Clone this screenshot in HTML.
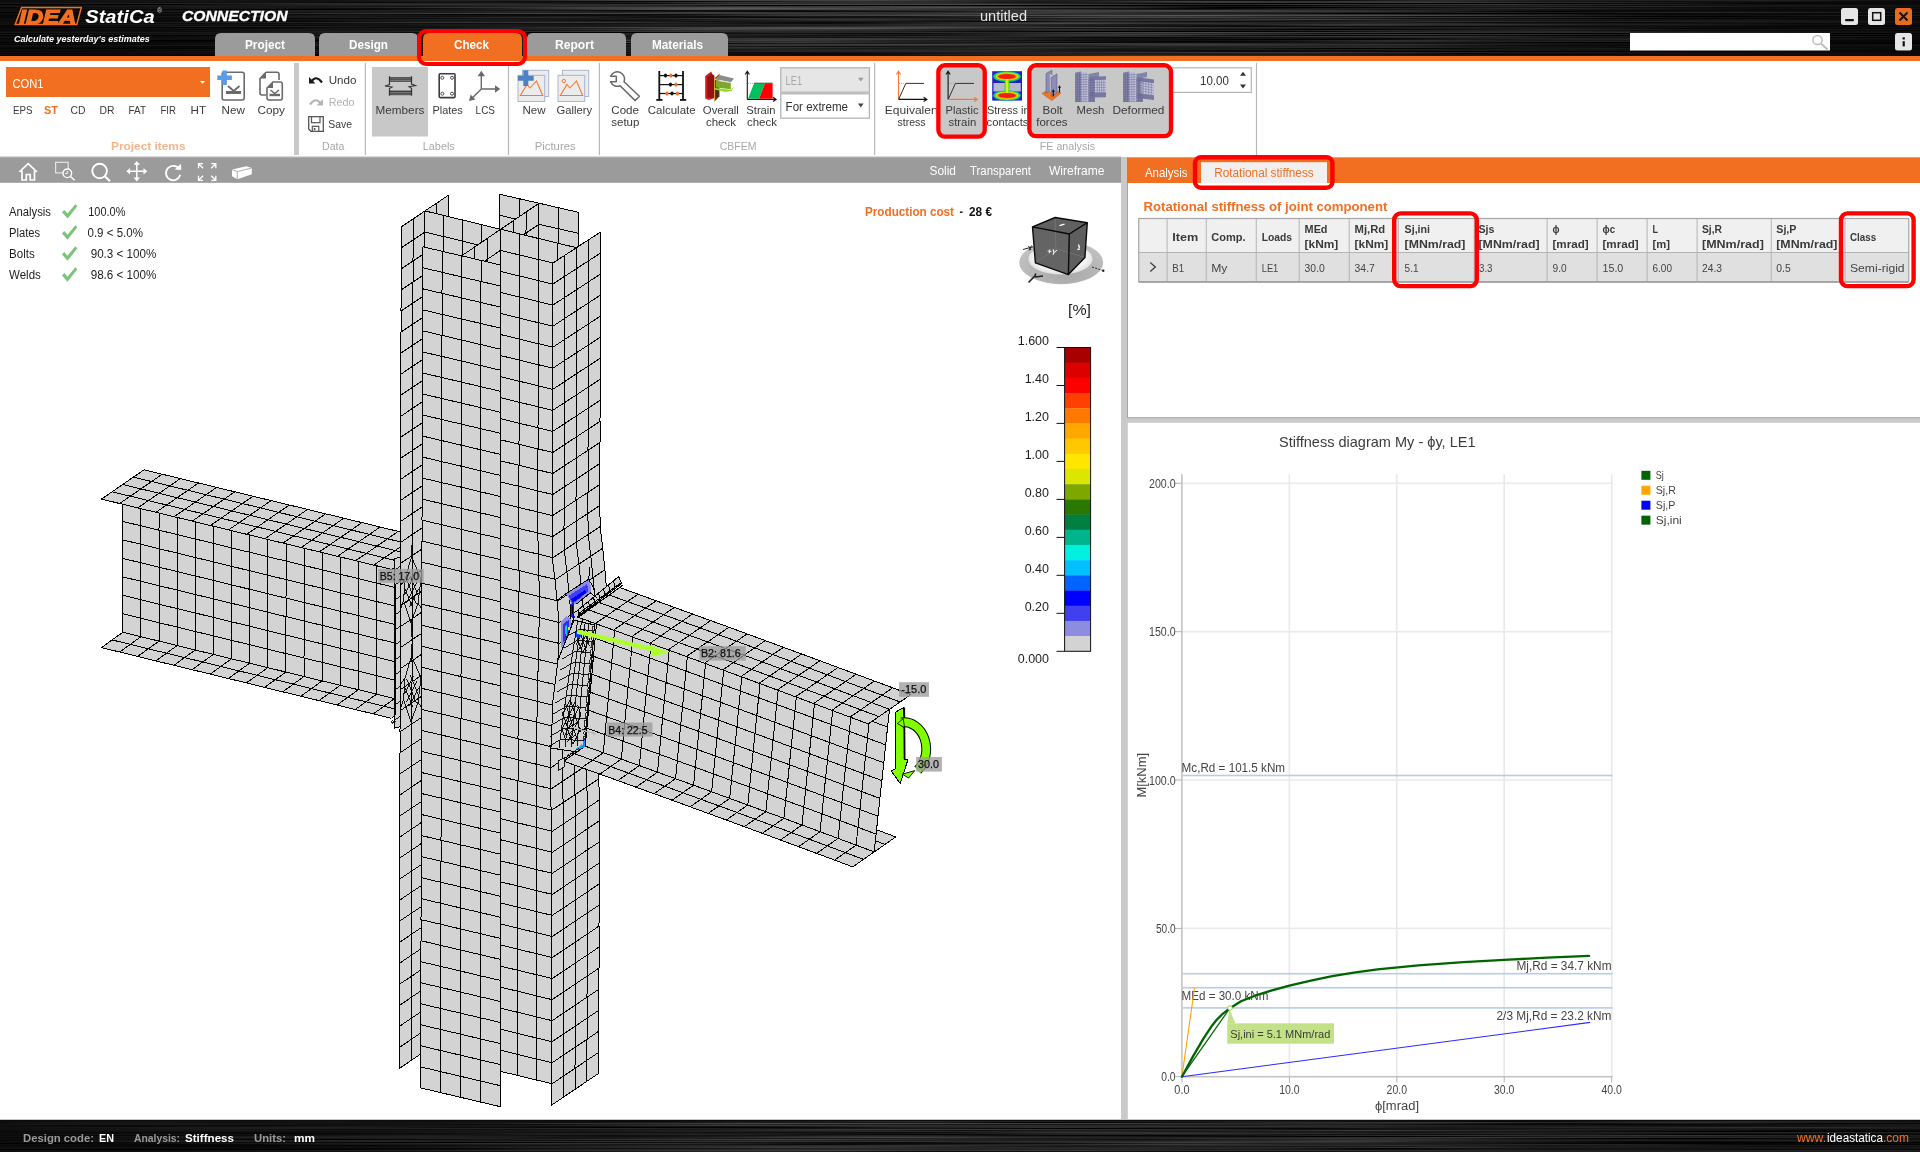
<!DOCTYPE html>
<html><head><meta charset="utf-8"><title>IDEA StatiCa Connection</title>
<style>
html,body{margin:0;padding:0;background:#fff;}
body{width:1920px;height:1152px;overflow:hidden;position:relative;font-family:"Liberation Sans",sans-serif;}
svg{position:absolute;left:0;top:0;will-change:transform;}
svg text{font-family:"Liberation Sans",sans-serif;}
</style></head><body>
<svg width="1920" height="1152" viewBox="0 0 1920 1152">
<defs>
<filter id="brush" x="0" y="0" width="100%" height="100%" filterUnits="objectBoundingBox" color-interpolation-filters="sRGB">
<feTurbulence type="fractalNoise" baseFrequency="0.002 1.1" numOctaves="3" seed="11" result="n"/>
<feColorMatrix in="n" type="matrix" values="0.72 0 0 0 -0.185  0.72 0 0 0 -0.185  0.72 0 0 0 -0.185  0 0 0 0 1"/>
</filter>
<filter id="brush2" x="0" y="0" width="100%" height="100%" filterUnits="objectBoundingBox" color-interpolation-filters="sRGB">
<feTurbulence type="fractalNoise" baseFrequency="0.002 0.85" numOctaves="3" seed="3" result="n"/>
<feColorMatrix in="n" type="matrix" values="0.5 0 0 0 -0.115  0.5 0 0 0 -0.115  0.5 0 0 0 -0.115  0 0 0 0 1"/>
</filter>
<linearGradient id="tbg" x1="0" y1="0" x2="1" y2="0">
<stop offset="0" stop-color="#000" stop-opacity="0.72"/><stop offset="0.12" stop-color="#000" stop-opacity="0.6"/><stop offset="0.35" stop-color="#000" stop-opacity="0.15"/><stop offset="0.55" stop-color="#000" stop-opacity="0"/><stop offset="0.72" stop-color="#000" stop-opacity="0.2"/><stop offset="0.9" stop-color="#000" stop-opacity="0.62"/><stop offset="1" stop-color="#000" stop-opacity="0.75"/>
</linearGradient>
<linearGradient id="sbg" x1="0" y1="0" x2="1" y2="0">
<stop offset="0" stop-color="#000" stop-opacity="0.65"/><stop offset="0.15" stop-color="#000" stop-opacity="0.5"/><stop offset="0.4" stop-color="#000" stop-opacity="0.05"/><stop offset="0.7" stop-color="#000" stop-opacity="0.05"/><stop offset="1" stop-color="#000" stop-opacity="0.45"/>
</linearGradient>
<linearGradient id="tbv" x1="0" y1="0" x2="0" y2="1">
<stop offset="0" stop-color="#000" stop-opacity="0"/><stop offset="0.5" stop-color="#000" stop-opacity="0.1"/><stop offset="1" stop-color="#000" stop-opacity="0.35"/>
</linearGradient>
</defs><g id="mesh" shape-rendering="crispEdges"><path d="M144.1,617 162.2,621.4 180.3,625.8 198.4,630.3 216.6,634.7 234.7,639.1 252.8,643.5 270.9,647.9 289.1,652.4 307.2,656.8 325.3,661.2 343.4,665.6 361.6,670 379.7,674.4 397.8,678.9 415.9,683.3 434.1,687.7 423.4,695.4 412.8,703 402.1,710.6 391.4,718.3 373.3,713.9 355.2,709.5 337.1,705 318.9,700.6 300.8,696.2 282.7,691.8 264.6,687.4 246.4,682.9 228.3,678.5 210.2,674.1 192.1,669.7 173.9,665.3 155.8,660.9 137.7,656.4 119.6,652 101.5,647.6 112.1,639.9 122.8,632.3 133.4,624.6Z" fill="#d3d3d3" stroke="none"/><path d="M144.1,617 133.4,624.6 122.8,632.3 112.1,639.9 101.5,647.6M162.2,621.4 151.5,629.1 140.9,636.7 130.2,644.4 119.6,652M180.3,625.8 169.7,633.5 159,641.1 148.3,648.8 137.7,656.4M198.4,630.3 187.8,637.9 177.1,645.6 166.5,653.2 155.8,660.9M216.6,634.7 205.9,642.3 195.2,650 184.6,657.6 173.9,665.3M234.7,639.1 224,646.7 213.4,654.4 202.7,662 192.1,669.7M252.8,643.5 242.2,651.2 231.5,658.8 220.8,666.5 210.2,674.1M270.9,647.9 260.3,655.6 249.6,663.2 239,670.9 228.3,678.5M289.1,652.4 278.4,660 267.8,667.6 257.1,675.3 246.4,682.9M307.2,656.8 296.5,664.4 285.9,672.1 275.2,679.7 264.6,687.4M325.3,661.2 314.6,668.8 304,676.5 293.4,684.1 282.7,691.8M343.4,665.6 332.8,673.3 322.1,680.9 311.5,688.6 300.8,696.2M361.6,670 350.9,677.7 340.2,685.3 329.6,693 318.9,700.6M379.7,674.4 369,682.1 358.4,689.7 347.7,697.4 337.1,705M397.8,678.9 387.1,686.5 376.5,694.2 365.9,701.8 355.2,709.5M415.9,683.3 405.3,690.9 394.6,698.6 384,706.2 373.3,713.9M434.1,687.7 423.4,695.4 412.8,703 402.1,710.6 391.4,718.3M144.1,617 162.2,621.4 180.3,625.8 198.4,630.3 216.6,634.7 234.7,639.1 252.8,643.5 270.9,647.9 289.1,652.4 307.2,656.8 325.3,661.2 343.4,665.6 361.6,670 379.7,674.4 397.8,678.9 415.9,683.3 434.1,687.7M133.4,624.6 151.5,629.1 169.7,633.5 187.8,637.9 205.9,642.3 224,646.7 242.2,651.2 260.3,655.6 278.4,660 296.5,664.4 314.6,668.8 332.8,673.3 350.9,677.7 369,682.1 387.1,686.5 405.3,690.9 423.4,695.4M122.8,632.3 140.9,636.7 159,641.1 177.1,645.6 195.2,650 213.4,654.4 231.5,658.8 249.6,663.2 267.8,667.6 285.9,672.1 304,676.5 322.1,680.9 340.2,685.3 358.4,689.7 376.5,694.2 394.6,698.6 412.8,703M112.1,639.9 130.2,644.4 148.3,648.8 166.5,653.2 184.6,657.6 202.7,662 220.8,666.5 239,670.9 257.1,675.3 275.2,679.7 293.4,684.1 311.5,688.6 329.6,693 347.7,697.4 365.9,701.8 384,706.2 402.1,710.6M101.5,647.6 119.6,652 137.7,656.4 155.8,660.9 173.9,665.3 192.1,669.7 210.2,674.1 228.3,678.5 246.4,682.9 264.6,687.4 282.7,691.8 300.8,696.2 318.9,700.6 337.1,705 355.2,709.5 373.3,713.9 391.4,718.3" fill="none" stroke="#000" stroke-width="1" stroke-linejoin="round"/><path d="M122.8,484.4 140.9,488.9 159.1,493.3 177.2,497.7 195.4,502.1 213.5,506.5 231.7,510.9 249.8,515.3 268,519.7 286.2,524.1 304.3,528.5 322.5,532.9 340.6,537.3 358.8,541.7 376.9,546.1 395.1,550.5 395,569 395,587.5 394.9,606 394.9,624.5 394.8,643 394.7,661.6 394.7,680.1 394.6,698.6 376.5,694.2 358.4,689.7 340.2,685.3 322.1,680.9 304,676.5 285.9,672.1 267.8,667.6 249.6,663.2 231.5,658.8 213.4,654.4 195.2,650 177.1,645.6 159,641.1 140.9,636.7 122.8,632.3 122.8,613.8 122.8,595.3 122.8,576.9 122.8,558.4 122.8,539.9 122.8,521.4 122.8,502.9Z" fill="#d3d3d3" stroke="none"/><path d="M122.8,484.4 122.8,502.9 122.8,521.4 122.8,539.9 122.8,558.4 122.8,576.9 122.8,595.3 122.8,613.8 122.8,632.3M140.9,488.9 140.9,507.3 140.9,525.8 140.9,544.3 140.9,562.8 140.9,581.3 140.9,599.8 140.9,618.2 140.9,636.7M159.1,493.3 159.1,511.7 159,530.2 159,548.7 159,567.2 159,585.7 159,604.2 159,622.7 159,641.1M177.2,497.7 177.2,516.1 177.2,534.6 177.2,553.1 177.2,571.6 177.2,590.1 177.1,608.6 177.1,627.1 177.1,645.6M195.4,502.1 195.4,520.6 195.3,539 195.3,557.5 195.3,576 195.3,594.5 195.3,613 195.3,631.5 195.2,650M213.5,506.5 213.5,525 213.5,543.4 213.5,561.9 213.5,580.4 213.4,598.9 213.4,617.4 213.4,635.9 213.4,654.4M231.7,510.9 231.7,529.4 231.6,547.9 231.6,566.3 231.6,584.8 231.6,603.3 231.5,621.8 231.5,640.3 231.5,658.8M249.8,515.3 249.8,533.8 249.8,552.3 249.8,570.8 249.7,589.3 249.7,607.7 249.7,626.2 249.7,644.7 249.6,663.2M268,519.7 268,538.2 267.9,556.7 267.9,575.2 267.9,593.7 267.8,612.2 267.8,630.7 267.8,649.2 267.8,667.6M286.2,524.1 286.1,542.6 286.1,561.1 286.1,579.6 286,598.1 286,616.6 285.9,635.1 285.9,653.6 285.9,672.1M304.3,528.5 304.3,547 304.2,565.5 304.2,584 304.2,602.5 304.1,621 304.1,639.5 304,658 304,676.5M322.5,532.9 322.4,551.4 322.4,569.9 322.3,588.4 322.3,606.9 322.3,625.4 322.2,643.9 322.2,662.4 322.1,680.9M340.6,537.3 340.6,555.8 340.5,574.3 340.5,592.8 340.4,611.3 340.4,629.8 340.3,648.3 340.3,666.8 340.2,685.3M358.8,541.7 358.7,560.2 358.7,578.7 358.6,597.2 358.6,615.7 358.5,634.2 358.5,652.7 358.4,671.2 358.4,689.7M376.9,546.1 376.9,564.6 376.8,583.1 376.8,601.6 376.7,620.1 376.7,638.6 376.6,657.1 376.6,675.7 376.5,694.2M395.1,550.5 395,569 395,587.5 394.9,606 394.9,624.5 394.8,643 394.7,661.6 394.7,680.1 394.6,698.6M122.8,484.4 140.9,488.9 159.1,493.3 177.2,497.7 195.4,502.1 213.5,506.5 231.7,510.9 249.8,515.3 268,519.7 286.2,524.1 304.3,528.5 322.5,532.9 340.6,537.3 358.8,541.7 376.9,546.1 395.1,550.5M122.8,502.9 140.9,507.3 159.1,511.7 177.2,516.1 195.4,520.6 213.5,525 231.7,529.4 249.8,533.8 268,538.2 286.1,542.6 304.3,547 322.4,551.4 340.6,555.8 358.7,560.2 376.9,564.6 395,569M122.8,521.4 140.9,525.8 159,530.2 177.2,534.6 195.3,539 213.5,543.4 231.6,547.9 249.8,552.3 267.9,556.7 286.1,561.1 304.2,565.5 322.4,569.9 340.5,574.3 358.7,578.7 376.8,583.1 395,587.5M122.8,539.9 140.9,544.3 159,548.7 177.2,553.1 195.3,557.5 213.5,561.9 231.6,566.3 249.8,570.8 267.9,575.2 286.1,579.6 304.2,584 322.3,588.4 340.5,592.8 358.6,597.2 376.8,601.6 394.9,606M122.8,558.4 140.9,562.8 159,567.2 177.2,571.6 195.3,576 213.5,580.4 231.6,584.8 249.7,589.3 267.9,593.7 286,598.1 304.2,602.5 322.3,606.9 340.4,611.3 358.6,615.7 376.7,620.1 394.9,624.5M122.8,576.9 140.9,581.3 159,585.7 177.2,590.1 195.3,594.5 213.4,598.9 231.6,603.3 249.7,607.7 267.8,612.2 286,616.6 304.1,621 322.3,625.4 340.4,629.8 358.5,634.2 376.7,638.6 394.8,643M122.8,595.3 140.9,599.8 159,604.2 177.1,608.6 195.3,613 213.4,617.4 231.5,621.8 249.7,626.2 267.8,630.7 285.9,635.1 304.1,639.5 322.2,643.9 340.3,648.3 358.5,652.7 376.6,657.1 394.7,661.6M122.8,613.8 140.9,618.2 159,622.7 177.1,627.1 195.3,631.5 213.4,635.9 231.5,640.3 249.7,644.7 267.8,649.2 285.9,653.6 304,658 322.2,662.4 340.3,666.8 358.4,671.2 376.6,675.7 394.7,680.1M122.8,632.3 140.9,636.7 159,641.1 177.1,645.6 195.2,650 213.4,654.4 231.5,658.8 249.6,663.2 267.8,667.6 285.9,672.1 304,676.5 322.1,680.9 340.2,685.3 358.4,689.7 376.5,694.2 394.6,698.6" fill="none" stroke="#000" stroke-width="1" stroke-linejoin="round"/><path d="M144.1,469.8 162.2,474.2 180.4,478.6 198.5,483 216.7,487.4 234.8,491.8 253,496.2 271.1,500.6 289.3,505 307.5,509.4 325.6,513.8 343.8,518.2 361.9,522.6 380.1,527 398.2,531.4 416.4,535.8 434.6,540.2 423.9,547.6 413.2,554.9 402.6,562.2 391.9,569.5 373.8,565.1 355.6,560.7 337.5,556.3 319.3,551.9 301.2,547.5 283,543.1 264.9,538.7 246.7,534.3 228.5,529.9 210.4,525.5 192.2,521.1 174.1,516.7 155.9,512.3 137.8,507.9 119.6,503.5 101.5,499.1 112.1,491.8 122.8,484.4 133.4,477.1Z" fill="#d3d3d3" stroke="none"/><path d="M144.1,469.8 133.4,477.1 122.8,484.4 112.1,491.8 101.5,499.1M162.2,474.2 151.6,481.5 140.9,488.9 130.3,496.2 119.6,503.5M180.4,478.6 169.7,485.9 159.1,493.3 148.4,500.6 137.8,507.9M198.5,483 187.9,490.3 177.2,497.7 166.6,505 155.9,512.3M216.7,487.4 206,494.7 195.4,502.1 184.7,509.4 174.1,516.7M234.8,491.8 224.2,499.1 213.5,506.5 202.9,513.8 192.2,521.1M253,496.2 242.3,503.5 231.7,510.9 221,518.2 210.4,525.5M271.1,500.6 260.5,507.9 249.8,515.3 239.2,522.6 228.5,529.9M289.3,505 278.6,512.3 268,519.7 257.4,527 246.7,534.3M307.5,509.4 296.8,516.8 286.2,524.1 275.5,531.4 264.9,538.7M325.6,513.8 315,521.2 304.3,528.5 293.7,535.8 283,543.1M343.8,518.2 333.1,525.6 322.5,532.9 311.8,540.2 301.2,547.5M361.9,522.6 351.3,530 340.6,537.3 330,544.6 319.3,551.9M380.1,527 369.4,534.4 358.8,541.7 348.1,549 337.5,556.3M398.2,531.4 387.6,538.8 376.9,546.1 366.3,553.4 355.6,560.7M416.4,535.8 405.7,543.2 395.1,550.5 384.4,557.8 373.8,565.1M434.6,540.2 423.9,547.6 413.2,554.9 402.6,562.2 391.9,569.5M144.1,469.8 162.2,474.2 180.4,478.6 198.5,483 216.7,487.4 234.8,491.8 253,496.2 271.1,500.6 289.3,505 307.5,509.4 325.6,513.8 343.8,518.2 361.9,522.6 380.1,527 398.2,531.4 416.4,535.8 434.6,540.2M133.4,477.1 151.6,481.5 169.7,485.9 187.9,490.3 206,494.7 224.2,499.1 242.3,503.5 260.5,507.9 278.6,512.3 296.8,516.8 315,521.2 333.1,525.6 351.3,530 369.4,534.4 387.6,538.8 405.7,543.2 423.9,547.6M122.8,484.4 140.9,488.9 159.1,493.3 177.2,497.7 195.4,502.1 213.5,506.5 231.7,510.9 249.8,515.3 268,519.7 286.2,524.1 304.3,528.5 322.5,532.9 340.6,537.3 358.8,541.7 376.9,546.1 395.1,550.5 413.2,554.9M112.1,491.8 130.3,496.2 148.4,500.6 166.6,505 184.7,509.4 202.9,513.8 221,518.2 239.2,522.6 257.4,527 275.5,531.4 293.7,535.8 311.8,540.2 330,544.6 348.1,549 366.3,553.4 384.4,557.8 402.6,562.2M101.5,499.1 119.6,503.5 137.8,507.9 155.9,512.3 174.1,516.7 192.2,521.1 210.4,525.5 228.5,529.9 246.7,534.3 264.9,538.7 283,543.1 301.2,547.5 319.3,551.9 337.5,556.3 355.6,560.7 373.8,565.1 391.9,569.5" fill="none" stroke="#000" stroke-width="1" stroke-linejoin="round"/><path d="M499.4,194.2 519.2,198.7 539,203.2 558.7,207.8 578.5,212.3 578.5,233.3 578.4,254.4 578.4,275.4 578.4,296.4 578.3,317.5 578.3,338.5 578.2,359.5 578.2,380.5 578.2,401.6 578.1,422.6 578.1,443.6 578,464.7 558.3,460.1 538.5,455.6 518.7,451.1 498.9,446.6 499,425.5 499,404.5 499.1,383.5 499.1,362.4 499.1,341.4 499.2,320.4 499.2,299.4 499.2,278.3 499.3,257.3 499.3,236.3 499.4,215.2Z" fill="#d3d3d3" stroke="none"/><path d="M499.4,194.2 499.4,215.2 499.3,236.3 499.3,257.3 499.2,278.3 499.2,299.4 499.2,320.4 499.1,341.4 499.1,362.4 499.1,383.5 499,404.5 499,425.5 498.9,446.6M519.2,198.7 519.1,219.8 519.1,240.8 519.1,261.8 519,282.8 519,303.9 518.9,324.9 518.9,345.9 518.9,367 518.8,388 518.8,409 518.8,430.1 518.7,451.1M539,203.2 538.9,224.3 538.9,245.3 538.8,266.3 538.8,287.4 538.8,308.4 538.7,329.4 538.7,350.5 538.7,371.5 538.6,392.5 538.6,413.6 538.5,434.6 538.5,455.6M558.7,207.8 558.7,228.8 558.6,249.8 558.6,270.9 558.6,291.9 558.5,312.9 558.5,334 558.5,355 558.4,376 558.4,397 558.4,418.1 558.3,439.1 558.3,460.1M578.5,212.3 578.5,233.3 578.4,254.4 578.4,275.4 578.4,296.4 578.3,317.5 578.3,338.5 578.2,359.5 578.2,380.5 578.2,401.6 578.1,422.6 578.1,443.6 578,464.7M499.4,194.2 519.2,198.7 539,203.2 558.7,207.8 578.5,212.3M499.4,215.2 519.1,219.8 538.9,224.3 558.7,228.8 578.5,233.3M499.3,236.3 519.1,240.8 538.9,245.3 558.6,249.8 578.4,254.4M499.3,257.3 519.1,261.8 538.8,266.3 558.6,270.9 578.4,275.4M499.2,278.3 519,282.8 538.8,287.4 558.6,291.9 578.4,296.4M499.2,299.4 519,303.9 538.8,308.4 558.5,312.9 578.3,317.5M499.2,320.4 518.9,324.9 538.7,329.4 558.5,334 578.3,338.5M499.1,341.4 518.9,345.9 538.7,350.5 558.5,355 578.2,359.5M499.1,362.4 518.9,367 538.7,371.5 558.4,376 578.2,380.5M499.1,383.5 518.8,388 538.6,392.5 558.4,397 578.2,401.6M499,404.5 518.8,409 538.6,413.6 558.4,418.1 578.1,422.6M499,425.5 518.8,430.1 538.5,434.6 558.3,439.1 578.1,443.6M498.9,446.6 518.7,451.1 538.5,455.6 558.3,460.1 578,464.7" fill="none" stroke="#000" stroke-width="1" stroke-linejoin="round"/><path d="M401.2,226.9 413.1,218.9 425,210.9 436.9,203 448.8,195 448.7,216 448.6,237.1 448.6,258.1 448.5,279.2 448.5,300.2 448.4,321.2 448.4,342.3 448.3,363.3 448.3,384.4 448.2,405.4 448.2,426.4 448.1,447.5 448.1,468.5 448,489.6 448,510.6 447.9,531.6 447.9,552.7 447.8,573.7 447.8,594.8 447.7,615.8 447.7,636.8 447.6,657.9 447.6,678.9 447.5,700 447.5,721 447.4,742 447.4,763.1 447.3,784.1 447.3,805.2 447.2,826.2 447.2,847.2 447.1,868.3 447.1,889.3 447,910.4 447,931.4 446.9,952.4 446.9,973.5 446.8,994.5 446.8,1015.6 446.7,1036.6 434.8,1044.6 422.9,1052.5 411.1,1060.5 399.2,1068.5 399.3,1047.5 399.3,1026.4 399.4,1005.4 399.4,984.3 399.5,963.3 399.5,942.3 399.6,921.2 399.6,900.2 399.7,879.1 399.7,858.1 399.8,837.1 399.8,816 399.9,795 399.9,773.9 400,752.9 400,731.9 400.1,710.8 400.1,689.8 400.2,668.7 400.2,647.7 400.3,626.7 400.3,605.6 400.4,584.6 400.4,563.5 400.5,542.5 400.5,521.5 400.6,500.4 400.6,479.4 400.7,458.3 400.7,437.3 400.8,416.3 400.8,395.2 400.9,374.2 400.9,353.1 401,332.1 401,311.1 401.1,290 401.1,269 401.2,247.9Z" fill="#d3d3d3" stroke="none"/><path d="M401.2,226.9 401.2,247.9 401.1,269 401.1,290 401,311.1 401,332.1 400.9,353.1 400.9,374.2 400.8,395.2 400.8,416.3 400.7,437.3 400.7,458.3 400.6,479.4 400.6,500.4 400.5,521.5 400.5,542.5 400.4,563.5 400.4,584.6 400.3,605.6 400.3,626.7 400.2,647.7 400.2,668.7 400.1,689.8 400.1,710.8 400,731.9 400,752.9 399.9,773.9 399.9,795 399.8,816 399.8,837.1 399.7,858.1 399.7,879.1 399.6,900.2 399.6,921.2 399.5,942.3 399.5,963.3 399.4,984.3 399.4,1005.4 399.3,1026.4 399.3,1047.5 399.2,1068.5M413.1,218.9 413.1,240 413,261 413,282 412.9,303.1 412.9,324.1 412.8,345.2 412.8,366.2 412.7,387.2 412.7,408.3 412.6,429.3 412.6,450.4 412.5,471.4 412.5,492.4 412.4,513.5 412.4,534.5 412.3,555.6 412.3,576.6 412.2,597.6 412.2,618.7 412.1,639.7 412,660.8 412,681.8 411.9,702.8 411.9,723.9 411.8,744.9 411.8,766 411.7,787 411.7,808 411.6,829.1 411.6,850.1 411.5,871.2 411.5,892.2 411.4,913.2 411.4,934.3 411.3,955.3 411.3,976.4 411.2,997.4 411.2,1018.4 411.1,1039.5 411.1,1060.5M425,210.9 424.9,232 424.9,253 424.8,274.1 424.8,295.1 424.7,316.1 424.7,337.2 424.6,358.2 424.6,379.3 424.5,400.3 424.5,421.3 424.4,442.4 424.4,463.4 424.3,484.5 424.3,505.5 424.2,526.5 424.2,547.6 424.1,568.6 424.1,589.7 424,610.7 424,631.8 423.9,652.8 423.9,673.8 423.8,694.9 423.8,715.9 423.7,737 423.7,758 423.6,779 423.6,800.1 423.5,821.1 423.5,842.1 423.4,863.2 423.4,884.2 423.3,905.3 423.3,926.3 423.2,947.3 423.2,968.4 423.1,989.4 423.1,1010.5 423,1031.5 422.9,1052.5M436.9,203 436.8,224 436.8,245.1 436.7,266.1 436.7,287.1 436.6,308.2 436.6,329.2 436.5,350.3 436.5,371.3 436.4,392.3 436.4,413.4 436.3,434.4 436.3,455.5 436.2,476.5 436.2,497.5 436.1,518.6 436.1,539.6 436,560.7 436,581.7 435.9,602.7 435.9,623.8 435.8,644.8 435.7,665.9 435.7,686.9 435.6,707.9 435.6,729 435.5,750 435.5,771.1 435.4,792.1 435.4,813.1 435.3,834.2 435.3,855.2 435.2,876.3 435.2,897.3 435.1,918.3 435.1,939.4 435,960.4 435,981.5 434.9,1002.5 434.9,1023.5 434.8,1044.6M448.8,195 448.7,216 448.6,237.1 448.6,258.1 448.5,279.2 448.5,300.2 448.4,321.2 448.4,342.3 448.3,363.3 448.3,384.4 448.2,405.4 448.2,426.4 448.1,447.5 448.1,468.5 448,489.6 448,510.6 447.9,531.6 447.9,552.7 447.8,573.7 447.8,594.8 447.7,615.8 447.7,636.8 447.6,657.9 447.6,678.9 447.5,700 447.5,721 447.4,742 447.4,763.1 447.3,784.1 447.3,805.2 447.2,826.2 447.2,847.2 447.1,868.3 447.1,889.3 447,910.4 447,931.4 446.9,952.4 446.9,973.5 446.8,994.5 446.8,1015.6 446.7,1036.6M401.2,226.9 413.1,218.9 425,210.9 436.9,203 448.8,195M401.2,247.9 413.1,240 424.9,232 436.8,224 448.7,216M401.1,269 413,261 424.9,253 436.8,245.1 448.6,237.1M401.1,290 413,282 424.8,274.1 436.7,266.1 448.6,258.1M401,311.1 412.9,303.1 424.8,295.1 436.7,287.1 448.5,279.2M401,332.1 412.9,324.1 424.7,316.1 436.6,308.2 448.5,300.2M400.9,353.1 412.8,345.2 424.7,337.2 436.6,329.2 448.4,321.2M400.9,374.2 412.8,366.2 424.6,358.2 436.5,350.3 448.4,342.3M400.8,395.2 412.7,387.2 424.6,379.3 436.5,371.3 448.3,363.3M400.8,416.3 412.7,408.3 424.5,400.3 436.4,392.3 448.3,384.4M400.7,437.3 412.6,429.3 424.5,421.3 436.4,413.4 448.2,405.4M400.7,458.3 412.6,450.4 424.4,442.4 436.3,434.4 448.2,426.4M400.6,479.4 412.5,471.4 424.4,463.4 436.3,455.5 448.1,447.5M400.6,500.4 412.5,492.4 424.3,484.5 436.2,476.5 448.1,468.5M400.5,521.5 412.4,513.5 424.3,505.5 436.2,497.5 448,489.6M400.5,542.5 412.4,534.5 424.2,526.5 436.1,518.6 448,510.6M400.4,563.5 412.3,555.6 424.2,547.6 436.1,539.6 447.9,531.6M400.4,584.6 412.3,576.6 424.1,568.6 436,560.7 447.9,552.7M400.3,605.6 412.2,597.6 424.1,589.7 436,581.7 447.8,573.7M400.3,626.7 412.2,618.7 424,610.7 435.9,602.7 447.8,594.8M400.2,647.7 412.1,639.7 424,631.8 435.9,623.8 447.7,615.8M400.2,668.7 412,660.8 423.9,652.8 435.8,644.8 447.7,636.8M400.1,689.8 412,681.8 423.9,673.8 435.7,665.9 447.6,657.9M400.1,710.8 411.9,702.8 423.8,694.9 435.7,686.9 447.6,678.9M400,731.9 411.9,723.9 423.8,715.9 435.6,707.9 447.5,700M400,752.9 411.8,744.9 423.7,737 435.6,729 447.5,721M399.9,773.9 411.8,766 423.7,758 435.5,750 447.4,742M399.9,795 411.7,787 423.6,779 435.5,771.1 447.4,763.1M399.8,816 411.7,808 423.6,800.1 435.4,792.1 447.3,784.1M399.8,837.1 411.6,829.1 423.5,821.1 435.4,813.1 447.3,805.2M399.7,858.1 411.6,850.1 423.5,842.1 435.3,834.2 447.2,826.2M399.7,879.1 411.5,871.2 423.4,863.2 435.3,855.2 447.2,847.2M399.6,900.2 411.5,892.2 423.4,884.2 435.2,876.3 447.1,868.3M399.6,921.2 411.4,913.2 423.3,905.3 435.2,897.3 447.1,889.3M399.5,942.3 411.4,934.3 423.3,926.3 435.1,918.3 447,910.4M399.5,963.3 411.3,955.3 423.2,947.3 435.1,939.4 447,931.4M399.4,984.3 411.3,976.4 423.2,968.4 435,960.4 446.9,952.4M399.4,1005.4 411.2,997.4 423.1,989.4 435,981.5 446.9,973.5M399.3,1026.4 411.2,1018.4 423.1,1010.5 434.9,1002.5 446.8,994.5M399.3,1047.5 411.1,1039.5 423,1031.5 434.9,1023.5 446.8,1015.6M399.2,1068.5 411.1,1060.5 422.9,1052.5 434.8,1044.6 446.7,1036.6" fill="none" stroke="#000" stroke-width="1" stroke-linejoin="round"/><path d="M500.2,229.6 513.2,220.8 526.1,212 539,203.2 538.9,224.3 538.9,245.3 538.9,266.4 538.8,287.4 538.8,308.4 538.8,329.5 538.8,350.5 538.7,371.5 525.8,380.3 512.9,389.1 500,397.8 500.1,376.8 500.1,355.8 500.1,334.7 500.1,313.7 500.2,292.7 500.2,271.6 500.2,250.6Z" fill="#d3d3d3" stroke="none"/><path d="M500.2,229.6 500.2,250.6 500.2,271.6 500.2,292.7 500.1,313.7 500.1,334.7 500.1,355.8 500.1,376.8 500,397.8M513.2,220.8 513.1,241.8 513.1,262.9 513.1,283.9 513,304.9 513,326 513,347 513,368 512.9,389.1M526.1,212 526,233.1 526,254.1 526,275.1 525.9,296.2 525.9,317.2 525.9,338.2 525.9,359.3 525.8,380.3M539,203.2 538.9,224.3 538.9,245.3 538.9,266.4 538.8,287.4 538.8,308.4 538.8,329.5 538.8,350.5 538.7,371.5M500.2,229.6 513.2,220.8 526.1,212 539,203.2M500.2,250.6 513.1,241.8 526,233.1 538.9,224.3M500.2,271.6 513.1,262.9 526,254.1 538.9,245.3M500.2,292.7 513.1,283.9 526,275.1 538.9,266.4M500.1,313.7 513,304.9 525.9,296.2 538.8,287.4M500.1,334.7 513,326 525.9,317.2 538.8,308.4M500.1,355.8 513,347 525.9,338.2 538.8,329.5M500.1,376.8 513,368 525.9,359.3 538.8,350.5M500,397.8 512.9,389.1 525.8,380.3 538.7,371.5" fill="none" stroke="#000" stroke-width="1" stroke-linejoin="round"/><path d="M425,210.9 443.9,215.5 462.9,220.1 481.8,224.7 500.7,229.3 500.7,250.4 500.6,271.4 500.5,292.4 500.5,313.5 500.4,334.5 500.3,355.5 500.3,376.6 500.2,397.6 481.3,393 462.3,388.4 443.4,383.8 424.5,379.2 424.5,358.2 424.6,337.2 424.7,316.1 424.7,295.1 424.8,274.1 424.9,253 424.9,232Z" fill="#d3d3d3" stroke="none"/><path d="M425,210.9 424.9,232 424.9,253 424.8,274.1 424.7,295.1 424.7,316.1 424.6,337.2 424.5,358.2 424.5,379.2M443.9,215.5 443.9,236.6 443.8,257.6 443.7,278.7 443.7,299.7 443.6,320.7 443.5,341.8 443.5,362.8 443.4,383.8M462.9,220.1 462.8,241.2 462.7,262.2 462.7,283.2 462.6,304.3 462.5,325.3 462.5,346.4 462.4,367.4 462.3,388.4M481.8,224.7 481.7,245.8 481.7,266.8 481.6,287.8 481.5,308.9 481.5,329.9 481.4,350.9 481.3,372 481.3,393M500.7,229.3 500.7,250.4 500.6,271.4 500.5,292.4 500.5,313.5 500.4,334.5 500.3,355.5 500.3,376.6 500.2,397.6M425,210.9 443.9,215.5 462.9,220.1 481.8,224.7 500.7,229.3M424.9,232 443.9,236.6 462.8,241.2 481.7,245.8 500.7,250.4M424.9,253 443.8,257.6 462.7,262.2 481.7,266.8 500.6,271.4M424.8,274.1 443.7,278.7 462.7,283.2 481.6,287.8 500.5,292.4M424.7,295.1 443.7,299.7 462.6,304.3 481.5,308.9 500.5,313.5M424.7,316.1 443.6,320.7 462.5,325.3 481.5,329.9 500.4,334.5M424.6,337.2 443.5,341.8 462.5,346.4 481.4,350.9 500.3,355.5M424.5,358.2 443.5,362.8 462.4,367.4 481.3,372 500.3,376.6M424.5,379.2 443.4,383.8 462.3,388.4 481.3,393 500.2,397.6" fill="none" stroke="#000" stroke-width="1" stroke-linejoin="round"/><path d="M500.7,229.3 519.7,233.9 538.6,238.5 557.5,243.1 576.5,247.7 576.4,268.7 576.3,289.8 576.3,310.8 576.2,331.8 576.1,352.9 576.1,373.9 576,394.9 576,416 575.9,437 575.8,458 575.8,479.1 575.7,500.1 575.7,521.2 575.9,542.3 578.5,563.9 580.7,585.5 582.4,606.9 582.3,628 581,648.7 579.3,669.4 577.5,690 575.7,710.6 574.1,731.3 573.3,752.2 573.8,773.3 574.3,794.5 574.8,815.6 574.7,836.7 574.7,857.7 574.6,878.8 574.6,899.8 574.5,920.8 574.4,941.9 574.4,962.9 574.3,983.9 574.2,1005 574.2,1026 574.1,1047 574.1,1068.1 574,1089.1 555,1084.5 536.1,1079.9 517.1,1075.3 498.1,1070.8 498.2,1049.7 498.3,1028.7 498.3,1007.6 498.4,986.6 498.5,965.6 498.5,944.5 498.6,923.5 498.7,902.5 498.7,881.4 498.8,860.4 498.9,839.4 498.9,818.3 499,797.3 499.1,776.3 499.1,755.2 499.2,734.2 499.2,713.1 499.3,692.1 499.4,671.1 499.4,650 499.5,629 499.6,608 499.6,586.9 499.7,565.9 499.8,544.9 499.8,523.8 499.9,502.8 500,481.8 500,460.7 500.1,439.7 500.1,418.6 500.2,397.6 500.3,376.6 500.3,355.5 500.4,334.5 500.5,313.5 500.5,292.4 500.6,271.4 500.7,250.4Z" fill="#d3d3d3" stroke="none"/><path d="M500.7,229.3 500.7,250.4 500.6,271.4 500.5,292.4 500.5,313.5 500.4,334.5 500.3,355.5 500.3,376.6 500.2,397.6 500.1,418.6 500.1,439.7 500,460.7 500,481.8 499.9,502.8 499.8,523.8 499.8,544.9 499.7,565.9 499.6,586.9 499.6,608 499.5,629 499.4,650 499.4,671.1 499.3,692.1 499.2,713.1 499.2,734.2 499.1,755.2 499.1,776.3 499,797.3 498.9,818.3 498.9,839.4 498.8,860.4 498.7,881.4 498.7,902.5 498.6,923.5 498.5,944.5 498.5,965.6 498.4,986.6 498.3,1007.6 498.3,1028.7 498.2,1049.7 498.1,1070.8M519.7,233.9 519.6,255 519.5,276 519.5,297 519.4,318.1 519.3,339.1 519.3,360.1 519.2,381.2 519.1,402.2 519.1,423.2 519,444.3 519,465.3 518.9,486.3 518.8,507.4 518.8,528.4 518.9,549.5 519,570.6 519,591.6 518.9,612.7 518.8,633.7 518.6,654.7 518.5,675.7 518.3,696.7 518.1,717.7 518,738.7 518,759.8 518,780.8 517.9,801.9 517.9,822.9 517.8,843.9 517.7,865 517.7,886 517.6,907.1 517.6,928.1 517.5,949.1 517.4,970.2 517.4,991.2 517.3,1012.2 517.2,1033.3 517.2,1054.3 517.1,1075.3M538.6,238.5 538.5,259.5 538.5,280.6 538.4,301.6 538.3,322.7 538.3,343.7 538.2,364.7 538.1,385.8 538.1,406.8 538,427.8 538,448.9 537.9,469.9 537.8,490.9 537.8,512 537.8,533 538.4,554.2 538.9,575.4 539.3,596.5 539.2,617.6 538.8,638.5 538.3,659.5 537.8,680.4 537.4,701.3 536.9,722.3 536.7,743.3 536.7,764.3 536.8,785.4 536.9,806.5 536.8,827.5 536.8,848.5 536.7,869.6 536.6,890.6 536.6,911.6 536.5,932.7 536.5,953.7 536.4,974.7 536.3,995.8 536.3,1016.8 536.2,1037.9 536.1,1058.9 536.1,1079.9M557.5,243.1 557.5,264.1 557.4,285.2 557.3,306.2 557.3,327.2 557.2,348.3 557.1,369.3 557.1,390.4 557,411.4 557,432.4 556.9,453.5 556.8,474.5 556.8,495.5 556.7,516.6 556.8,537.6 558.3,559 559.5,580.4 560.4,601.6 560.3,622.7 559.5,643.5 558.6,664.3 557.5,685.2 556.5,706 555.6,726.8 555.1,747.7 555.3,768.8 555.6,789.9 555.8,811.1 555.8,832.1 555.7,853.1 555.7,874.2 555.6,895.2 555.5,916.2 555.5,937.3 555.4,958.3 555.3,979.3 555.3,1000.4 555.2,1021.4 555.2,1042.4 555.1,1063.5 555,1084.5M576.5,247.7 576.4,268.7 576.3,289.8 576.3,310.8 576.2,331.8 576.1,352.9 576.1,373.9 576,394.9 576,416 575.9,437 575.8,458 575.8,479.1 575.7,500.1 575.7,521.2 575.9,542.3 578.5,563.9 580.7,585.5 582.4,606.9 582.3,628 581,648.7 579.3,669.4 577.5,690 575.7,710.6 574.1,731.3 573.3,752.2 573.8,773.3 574.3,794.5 574.8,815.6 574.7,836.7 574.7,857.7 574.6,878.8 574.6,899.8 574.5,920.8 574.4,941.9 574.4,962.9 574.3,983.9 574.2,1005 574.2,1026 574.1,1047 574.1,1068.1 574,1089.1M500.7,229.3 519.7,233.9 538.6,238.5 557.5,243.1 576.5,247.7M500.7,250.4 519.6,255 538.5,259.5 557.5,264.1 576.4,268.7M500.6,271.4 519.5,276 538.5,280.6 557.4,285.2 576.3,289.8M500.5,292.4 519.5,297 538.4,301.6 557.3,306.2 576.3,310.8M500.5,313.5 519.4,318.1 538.3,322.7 557.3,327.2 576.2,331.8M500.4,334.5 519.3,339.1 538.3,343.7 557.2,348.3 576.1,352.9M500.3,355.5 519.3,360.1 538.2,364.7 557.1,369.3 576.1,373.9M500.3,376.6 519.2,381.2 538.1,385.8 557.1,390.4 576,394.9M500.2,397.6 519.1,402.2 538.1,406.8 557,411.4 576,416M500.1,418.6 519.1,423.2 538,427.8 557,432.4 575.9,437M500.1,439.7 519,444.3 538,448.9 556.9,453.5 575.8,458M500,460.7 519,465.3 537.9,469.9 556.8,474.5 575.8,479.1M500,481.8 518.9,486.3 537.8,490.9 556.8,495.5 575.7,500.1M499.9,502.8 518.8,507.4 537.8,512 556.7,516.6 575.7,521.2M499.8,523.8 518.8,528.4 537.8,533 556.8,537.6 575.9,542.3M499.8,544.9 518.9,549.5 538.4,554.2 558.3,559 578.5,563.9M499.7,565.9 519,570.6 538.9,575.4 559.5,580.4 580.7,585.5M499.6,586.9 519,591.6 539.3,596.5 560.4,601.6 582.4,606.9M499.6,608 518.9,612.7 539.2,617.6 560.3,622.7 582.3,628M499.5,629 518.8,633.7 538.8,638.5 559.5,643.5 581,648.7M499.4,650 518.6,654.7 538.3,659.5 558.6,664.3 579.3,669.4M499.4,671.1 518.5,675.7 537.8,680.4 557.5,685.2 577.5,690M499.3,692.1 518.3,696.7 537.4,701.3 556.5,706 575.7,710.6M499.2,713.1 518.1,717.7 536.9,722.3 555.6,726.8 574.1,731.3M499.2,734.2 518,738.7 536.7,743.3 555.1,747.7 573.3,752.2M499.1,755.2 518,759.8 536.7,764.3 555.3,768.8 573.8,773.3M499.1,776.3 518,780.8 536.8,785.4 555.6,789.9 574.3,794.5M499,797.3 517.9,801.9 536.9,806.5 555.8,811.1 574.8,815.6M498.9,818.3 517.9,822.9 536.8,827.5 555.8,832.1 574.7,836.7M498.9,839.4 517.8,843.9 536.8,848.5 555.7,853.1 574.7,857.7M498.8,860.4 517.7,865 536.7,869.6 555.7,874.2 574.6,878.8M498.7,881.4 517.7,886 536.6,890.6 555.6,895.2 574.6,899.8M498.7,902.5 517.6,907.1 536.6,911.6 555.5,916.2 574.5,920.8M498.6,923.5 517.6,928.1 536.5,932.7 555.5,937.3 574.4,941.9M498.5,944.5 517.5,949.1 536.5,953.7 555.4,958.3 574.4,962.9M498.5,965.6 517.4,970.2 536.4,974.7 555.3,979.3 574.3,983.9M498.4,986.6 517.4,991.2 536.3,995.8 555.3,1000.4 574.2,1005M498.3,1007.6 517.3,1012.2 536.3,1016.8 555.2,1021.4 574.2,1026M498.3,1028.7 517.2,1033.3 536.2,1037.9 555.2,1042.4 574.1,1047M498.2,1049.7 517.2,1054.3 536.1,1058.9 555.1,1063.5 574.1,1068.1M498.1,1070.8 517.1,1075.3 536.1,1079.9 555,1084.5 574,1089.1" fill="none" stroke="#000" stroke-width="1" stroke-linejoin="round"/><path d="M461.6,255.8 474.5,247.1 487.4,238.3 500.2,229.6 500.2,250.6 500.2,271.6 500.2,292.7 500.1,313.7 500.1,334.7 500.1,355.8 500.1,376.8 500,397.8 487.1,406.6 474.2,415.4 461.3,424.1 461.4,403.1 461.4,382.1 461.4,361 461.4,340 461.5,319 461.5,297.9 461.5,276.9Z" fill="#d3d3d3" stroke="none"/><path d="M461.6,255.8 461.5,276.9 461.5,297.9 461.5,319 461.4,340 461.4,361 461.4,382.1 461.4,403.1 461.3,424.1M474.5,247.1 474.4,268.1 474.4,289.2 474.4,310.2 474.3,331.2 474.3,352.3 474.3,373.3 474.3,394.3 474.2,415.4M487.4,238.3 487.3,259.4 487.3,280.4 487.3,301.4 487.2,322.5 487.2,343.5 487.2,364.5 487.2,385.6 487.1,406.6M500.2,229.6 500.2,250.6 500.2,271.6 500.2,292.7 500.1,313.7 500.1,334.7 500.1,355.8 500.1,376.8 500,397.8M461.6,255.8 474.5,247.1 487.4,238.3 500.2,229.6M461.5,276.9 474.4,268.1 487.3,259.4 500.2,250.6M461.5,297.9 474.4,289.2 487.3,280.4 500.2,271.6M461.5,319 474.4,310.2 487.3,301.4 500.2,292.7M461.4,340 474.3,331.2 487.2,322.5 500.1,313.7M461.4,361 474.3,352.3 487.2,343.5 500.1,334.7M461.4,382.1 474.3,373.3 487.2,364.5 500.1,355.8M461.4,403.1 474.3,394.3 487.2,385.6 500.1,376.8M461.3,424.1 474.2,415.4 487.1,406.6 500,397.8" fill="none" stroke="#000" stroke-width="1" stroke-linejoin="round"/><path d="M552.5,263.3 564.5,255.5 576.5,247.7 588.4,239.9 600.4,232.1 600.4,253.1 600.3,274.2 600.3,295.2 600.2,316.2 600.2,337.2 600.2,358.3 600.1,379.3 600.1,400.3 600,421.4 600,442.4 599.9,463.4 599.9,484.5 599.9,505.5 600.1,526.6 602.7,548.2 604.9,569.8 606.7,591.3 606.6,612.3 605.3,633 603.6,653.7 601.8,674.3 600.1,694.9 598.5,715.6 597.8,736.4 598.2,757.6 598.8,778.8 599.3,799.9 599.2,820.9 599.2,842 599.2,863 599.1,884 599.1,905.1 599,926.1 599,947.1 599,968.1 598.9,989.2 598.9,1010.2 598.8,1031.2 598.8,1052.3 598.8,1073.3 586.9,1081.3 575,1089.3 563.1,1097.4 551.2,1105.4 551.3,1084.3 551.3,1063.3 551.3,1042.2 551.4,1021.2 551.4,1000.1 551.4,979.1 551.5,958 551.5,937 551.5,915.9 551.6,894.9 551.6,873.8 551.6,852.8 551.7,831.7 551.1,810.5 550.6,789.3 550.1,768.2 550.9,747.3 552.4,726.6 554.1,705.9 555.9,685.3 557.6,664.6 558.9,643.9 559,622.8 557.2,601.4 555,579.8 552.3,558.1 552.1,537 552.1,515.9 552.2,494.9 552.2,473.8 552.2,452.8 552.2,431.7 552.3,410.7 552.3,389.6 552.3,368.6 552.4,347.5 552.4,326.5 552.4,305.4 552.5,284.4Z" fill="#d3d3d3" stroke="none"/><path d="M552.5,263.3 552.5,284.4 552.4,305.4 552.4,326.5 552.4,347.5 552.3,368.6 552.3,389.6 552.3,410.7 552.2,431.7 552.2,452.8 552.2,473.8 552.2,494.9 552.1,515.9 552.1,537 552.3,558.1 555,579.8 557.2,601.4 559,622.8 558.9,643.9 557.6,664.6 555.9,685.3 554.1,705.9 552.4,726.6 550.9,747.3 550.1,768.2 550.6,789.3 551.1,810.5 551.7,831.7 551.6,852.8 551.6,873.8 551.6,894.9 551.5,915.9 551.5,937 551.5,958 551.4,979.1 551.4,1000.1 551.4,1021.2 551.3,1042.2 551.3,1063.3 551.3,1084.3 551.2,1105.4M564.5,255.5 564.4,276.5 564.4,297.6 564.4,318.6 564.3,339.7 564.3,360.7 564.3,381.8 564.2,402.8 564.2,423.9 564.2,444.9 564.1,466 564.1,487 564.1,508.1 564,529.1 564.3,550.2 566.9,571.9 569.1,593.5 570.9,614.9 570.8,636 569.5,656.7 567.9,677.4 566.1,698 564.4,718.7 562.8,739.4 562,760.2 562.5,781.4 563.1,802.6 563.6,823.8 563.5,844.8 563.5,865.9 563.5,886.9 563.4,908 563.4,929 563.4,950 563.3,971.1 563.3,992.1 563.3,1013.2 563.2,1034.2 563.2,1055.3 563.2,1076.3 563.1,1097.4M576.5,247.7 576.4,268.7 576.4,289.8 576.3,310.8 576.3,331.9 576.3,352.9 576.2,373.9 576.2,395 576.2,416 576.1,437.1 576.1,458.1 576.1,479.2 576,500.2 576,521.2 576.2,542.3 578.9,564 581.1,585.6 582.8,607.1 582.7,628.1 581.5,648.8 579.8,669.5 578,690.1 576.3,710.8 574.7,731.4 573.9,752.3 574.4,773.5 575,794.6 575.5,815.8 575.4,836.9 575.4,857.9 575.4,878.9 575.3,900 575.3,921 575.3,942.1 575.2,963.1 575.2,984.1 575.1,1005.2 575.1,1026.2 575.1,1047.3 575,1068.3 575,1089.3M588.4,239.9 588.4,260.9 588.3,282 588.3,303 588.3,324 588.2,345.1 588.2,366.1 588.2,387.1 588.1,408.2 588.1,429.2 588,450.3 588,471.3 588,492.3 587.9,513.4 588.2,534.5 590.8,556.1 593,577.7 594.8,599.2 594.7,620.2 593.4,640.9 591.7,661.6 589.9,682.2 588.2,702.8 586.6,723.5 585.9,744.4 586.3,765.5 586.9,786.7 587.4,807.9 587.3,828.9 587.3,849.9 587.3,871 587.2,892 587.2,913 587.1,934.1 587.1,955.1 587.1,976.1 587,997.2 587,1018.2 587,1039.3 586.9,1060.3 586.9,1081.3M600.4,232.1 600.4,253.1 600.3,274.2 600.3,295.2 600.2,316.2 600.2,337.2 600.2,358.3 600.1,379.3 600.1,400.3 600,421.4 600,442.4 599.9,463.4 599.9,484.5 599.9,505.5 600.1,526.6 602.7,548.2 604.9,569.8 606.7,591.3 606.6,612.3 605.3,633 603.6,653.7 601.8,674.3 600.1,694.9 598.5,715.6 597.8,736.4 598.2,757.6 598.8,778.8 599.3,799.9 599.2,820.9 599.2,842 599.2,863 599.1,884 599.1,905.1 599,926.1 599,947.1 599,968.1 598.9,989.2 598.9,1010.2 598.8,1031.2 598.8,1052.3 598.8,1073.3M552.5,263.3 564.5,255.5 576.5,247.7 588.4,239.9 600.4,232.1M552.5,284.4 564.4,276.5 576.4,268.7 588.4,260.9 600.4,253.1M552.4,305.4 564.4,297.6 576.4,289.8 588.3,282 600.3,274.2M552.4,326.5 564.4,318.6 576.3,310.8 588.3,303 600.3,295.2M552.4,347.5 564.3,339.7 576.3,331.9 588.3,324 600.2,316.2M552.3,368.6 564.3,360.7 576.3,352.9 588.2,345.1 600.2,337.2M552.3,389.6 564.3,381.8 576.2,373.9 588.2,366.1 600.2,358.3M552.3,410.7 564.2,402.8 576.2,395 588.2,387.1 600.1,379.3M552.2,431.7 564.2,423.9 576.2,416 588.1,408.2 600.1,400.3M552.2,452.8 564.2,444.9 576.1,437.1 588.1,429.2 600,421.4M552.2,473.8 564.1,466 576.1,458.1 588,450.3 600,442.4M552.2,494.9 564.1,487 576.1,479.2 588,471.3 599.9,463.4M552.1,515.9 564.1,508.1 576,500.2 588,492.3 599.9,484.5M552.1,537 564,529.1 576,521.2 587.9,513.4 599.9,505.5M552.3,558.1 564.3,550.2 576.2,542.3 588.2,534.5 600.1,526.6M555,579.8 566.9,571.9 578.9,564 590.8,556.1 602.7,548.2M557.2,601.4 569.1,593.5 581.1,585.6 593,577.7 604.9,569.8M559,622.8 570.9,614.9 582.8,607.1 594.8,599.2 606.7,591.3M558.9,643.9 570.8,636 582.7,628.1 594.7,620.2 606.6,612.3M557.6,664.6 569.5,656.7 581.5,648.8 593.4,640.9 605.3,633M555.9,685.3 567.9,677.4 579.8,669.5 591.7,661.6 603.6,653.7M554.1,705.9 566.1,698 578,690.1 589.9,682.2 601.8,674.3M552.4,726.6 564.4,718.7 576.3,710.8 588.2,702.8 600.1,694.9M550.9,747.3 562.8,739.4 574.7,731.4 586.6,723.5 598.5,715.6M550.1,768.2 562,760.2 573.9,752.3 585.9,744.4 597.8,736.4M550.6,789.3 562.5,781.4 574.4,773.5 586.3,765.5 598.2,757.6M551.1,810.5 563.1,802.6 575,794.6 586.9,786.7 598.8,778.8M551.7,831.7 563.6,823.8 575.5,815.8 587.4,807.9 599.3,799.9M551.6,852.8 563.5,844.8 575.4,836.9 587.3,828.9 599.2,820.9M551.6,873.8 563.5,865.9 575.4,857.9 587.3,849.9 599.2,842M551.6,894.9 563.5,886.9 575.4,878.9 587.3,871 599.2,863M551.5,915.9 563.4,908 575.3,900 587.2,892 599.1,884M551.5,937 563.4,929 575.3,921 587.2,913 599.1,905.1M551.5,958 563.4,950 575.3,942.1 587.1,934.1 599,926.1M551.4,979.1 563.3,971.1 575.2,963.1 587.1,955.1 599,947.1M551.4,1000.1 563.3,992.1 575.2,984.1 587.1,976.1 599,968.1M551.4,1021.2 563.3,1013.2 575.1,1005.2 587,997.2 598.9,989.2M551.3,1042.2 563.2,1034.2 575.1,1026.2 587,1018.2 598.9,1010.2M551.3,1063.3 563.2,1055.3 575.1,1047.3 587,1039.3 598.8,1031.2M551.3,1084.3 563.2,1076.3 575,1068.3 586.9,1060.3 598.8,1052.3M551.2,1105.4 563.1,1097.4 575,1089.3 586.9,1081.3 598.8,1073.3" fill="none" stroke="#000" stroke-width="1" stroke-linejoin="round"/><path d="M422.7,246.7 442.1,251.3 461.5,255.8 481,260.4 500.4,265 500.4,286 500.4,307.1 500.4,328.1 500.4,349.2 500.4,370.2 500.4,391.3 500.4,412.3 500.4,433.3 500.4,454.4 500.4,475.4 500.4,496.5 500.4,517.5 500.4,538.6 500.4,559.6 500.4,580.6 500.4,601.7 500.4,622.7 500.4,643.8 500.4,664.8 500.4,685.9 500.4,706.9 500.4,727.9 500.4,749 500.4,770 500.4,791.1 500.4,812.1 500.4,833.1 500.4,854.2 500.4,875.2 500.4,896.3 500.4,917.3 500.4,938.4 500.4,959.4 500.4,980.4 500.4,1001.5 500.4,1022.5 500.4,1043.6 500.4,1064.6 500.4,1085.7 500.4,1106.7 480.4,1102 460.5,1097.3 440.6,1092.6 420.6,1087.9 420.7,1066.9 420.7,1045.8 420.8,1024.8 420.8,1003.8 420.9,982.8 420.9,961.7 421,940.7 421,919.7 421.1,898.6 421.1,877.6 421.2,856.6 421.2,835.5 421.3,814.5 421.3,793.5 421.4,772.5 421.4,751.4 421.5,730.4 421.5,709.4 421.6,688.3 421.6,667.3 421.7,646.3 421.8,625.2 421.8,604.2 421.9,583.2 421.9,562.2 422,541.1 422,520.1 422.1,499.1 422.1,478 422.2,457 422.2,436 422.3,414.9 422.3,393.9 422.4,372.9 422.4,351.9 422.5,330.8 422.5,309.8 422.6,288.8 422.6,267.7Z" fill="#d3d3d3" stroke="none"/><path d="M422.7,246.7 422.6,267.7 422.6,288.8 422.5,309.8 422.5,330.8 422.4,351.9 422.4,372.9 422.3,393.9 422.3,414.9 422.2,436 422.2,457 422.1,478 422.1,499.1 422,520.1 422,541.1 421.9,562.2 421.9,583.2 421.8,604.2 421.8,625.2 421.7,646.3 421.6,667.3 421.6,688.3 421.5,709.4 421.5,730.4 421.4,751.4 421.4,772.5 421.3,793.5 421.3,814.5 421.2,835.5 421.2,856.6 421.1,877.6 421.1,898.6 421,919.7 421,940.7 420.9,961.7 420.9,982.8 420.8,1003.8 420.8,1024.8 420.7,1045.8 420.7,1066.9 420.6,1087.9M442.1,251.3 442.1,272.3 442,293.3 442,314.4 442,335.4 441.9,356.4 441.9,377.5 441.8,398.5 441.8,419.5 441.8,440.6 441.7,461.6 441.7,482.6 441.7,503.7 441.6,524.7 441.6,545.7 441.5,566.8 441.5,587.8 441.5,608.8 441.4,629.9 441.4,650.9 441.3,671.9 441.3,693 441.3,714 441.2,735 441.2,756.1 441.1,777.1 441.1,798.1 441.1,819.2 441,840.2 441,861.2 440.9,882.3 440.9,903.3 440.9,924.3 440.8,945.4 440.8,966.4 440.7,987.4 440.7,1008.5 440.7,1029.5 440.6,1050.5 440.6,1071.6 440.6,1092.6M461.5,255.8 461.5,276.9 461.5,297.9 461.5,319 461.4,340 461.4,361 461.4,382.1 461.4,403.1 461.3,424.1 461.3,445.2 461.3,466.2 461.3,487.2 461.2,508.3 461.2,529.3 461.2,550.4 461.2,571.4 461.1,592.4 461.1,613.5 461.1,634.5 461.1,655.5 461,676.6 461,697.6 461,718.6 460.9,739.7 460.9,760.7 460.9,781.8 460.9,802.8 460.8,823.8 460.8,844.9 460.8,865.9 460.8,886.9 460.7,908 460.7,929 460.7,950 460.7,971.1 460.6,992.1 460.6,1013.2 460.6,1034.2 460.6,1055.2 460.5,1076.3 460.5,1097.3M481,260.4 481,281.5 480.9,302.5 480.9,323.5 480.9,344.6 480.9,365.6 480.9,386.7 480.9,407.7 480.9,428.7 480.9,449.8 480.8,470.8 480.8,491.9 480.8,512.9 480.8,533.9 480.8,555 480.8,576 480.8,597.1 480.8,618.1 480.7,639.1 480.7,660.2 480.7,681.2 480.7,702.3 480.7,723.3 480.7,744.3 480.7,765.4 480.6,786.4 480.6,807.4 480.6,828.5 480.6,849.5 480.6,870.6 480.6,891.6 480.6,912.6 480.6,933.7 480.5,954.7 480.5,975.8 480.5,996.8 480.5,1017.8 480.5,1038.9 480.5,1059.9 480.5,1081 480.4,1102M500.4,265 500.4,286 500.4,307.1 500.4,328.1 500.4,349.2 500.4,370.2 500.4,391.3 500.4,412.3 500.4,433.3 500.4,454.4 500.4,475.4 500.4,496.5 500.4,517.5 500.4,538.6 500.4,559.6 500.4,580.6 500.4,601.7 500.4,622.7 500.4,643.8 500.4,664.8 500.4,685.9 500.4,706.9 500.4,727.9 500.4,749 500.4,770 500.4,791.1 500.4,812.1 500.4,833.1 500.4,854.2 500.4,875.2 500.4,896.3 500.4,917.3 500.4,938.4 500.4,959.4 500.4,980.4 500.4,1001.5 500.4,1022.5 500.4,1043.6 500.4,1064.6 500.4,1085.7 500.4,1106.7M422.7,246.7 442.1,251.3 461.5,255.8 481,260.4 500.4,265M422.6,267.7 442.1,272.3 461.5,276.9 481,281.5 500.4,286M422.6,288.8 442,293.3 461.5,297.9 480.9,302.5 500.4,307.1M422.5,309.8 442,314.4 461.5,319 480.9,323.5 500.4,328.1M422.5,330.8 442,335.4 461.4,340 480.9,344.6 500.4,349.2M422.4,351.9 441.9,356.4 461.4,361 480.9,365.6 500.4,370.2M422.4,372.9 441.9,377.5 461.4,382.1 480.9,386.7 500.4,391.3M422.3,393.9 441.8,398.5 461.4,403.1 480.9,407.7 500.4,412.3M422.3,414.9 441.8,419.5 461.3,424.1 480.9,428.7 500.4,433.3M422.2,436 441.8,440.6 461.3,445.2 480.9,449.8 500.4,454.4M422.2,457 441.7,461.6 461.3,466.2 480.8,470.8 500.4,475.4M422.1,478 441.7,482.6 461.3,487.2 480.8,491.9 500.4,496.5M422.1,499.1 441.7,503.7 461.2,508.3 480.8,512.9 500.4,517.5M422,520.1 441.6,524.7 461.2,529.3 480.8,533.9 500.4,538.6M422,541.1 441.6,545.7 461.2,550.4 480.8,555 500.4,559.6M421.9,562.2 441.5,566.8 461.2,571.4 480.8,576 500.4,580.6M421.9,583.2 441.5,587.8 461.1,592.4 480.8,597.1 500.4,601.7M421.8,604.2 441.5,608.8 461.1,613.5 480.8,618.1 500.4,622.7M421.8,625.2 441.4,629.9 461.1,634.5 480.7,639.1 500.4,643.8M421.7,646.3 441.4,650.9 461.1,655.5 480.7,660.2 500.4,664.8M421.6,667.3 441.3,671.9 461,676.6 480.7,681.2 500.4,685.9M421.6,688.3 441.3,693 461,697.6 480.7,702.3 500.4,706.9M421.5,709.4 441.3,714 461,718.6 480.7,723.3 500.4,727.9M421.5,730.4 441.2,735 460.9,739.7 480.7,744.3 500.4,749M421.4,751.4 441.2,756.1 460.9,760.7 480.7,765.4 500.4,770M421.4,772.5 441.1,777.1 460.9,781.8 480.6,786.4 500.4,791.1M421.3,793.5 441.1,798.1 460.9,802.8 480.6,807.4 500.4,812.1M421.3,814.5 441.1,819.2 460.8,823.8 480.6,828.5 500.4,833.1M421.2,835.5 441,840.2 460.8,844.9 480.6,849.5 500.4,854.2M421.2,856.6 441,861.2 460.8,865.9 480.6,870.6 500.4,875.2M421.1,877.6 440.9,882.3 460.8,886.9 480.6,891.6 500.4,896.3M421.1,898.6 440.9,903.3 460.7,908 480.6,912.6 500.4,917.3M421,919.7 440.9,924.3 460.7,929 480.6,933.7 500.4,938.4M421,940.7 440.8,945.4 460.7,950 480.5,954.7 500.4,959.4M420.9,961.7 440.8,966.4 460.7,971.1 480.5,975.8 500.4,980.4M420.9,982.8 440.7,987.4 460.6,992.1 480.5,996.8 500.4,1001.5M420.8,1003.8 440.7,1008.5 460.6,1013.2 480.5,1017.8 500.4,1022.5M420.8,1024.8 440.7,1029.5 460.6,1034.2 480.5,1038.9 500.4,1043.6M420.7,1045.8 440.6,1050.5 460.6,1055.2 480.5,1059.9 500.4,1064.6M420.7,1066.9 440.6,1071.6 460.5,1076.3 480.5,1081 500.4,1085.7M420.6,1087.9 440.6,1092.6 460.5,1097.3 480.4,1102 500.4,1106.7" fill="none" stroke="#000" stroke-width="1" stroke-linejoin="round"/><path d="M606.7,731.2 624.8,737.7 642.8,744.1 660.9,750.6 679,757.2 697,763.7 715.1,770.2 733.1,776.8 751.2,783.4 769.3,790 787.3,796.7 805.4,803.3 823.5,810 841.5,816.7 859.6,823.4 877.6,830.1 895.7,836.9 885,844.4 874.2,851.9 863.5,859.4 852.7,866.9 834.6,860.1 816.6,853.4 798.5,846.7 780.5,840 762.4,833.3 744.3,826.7 726.3,820 708.2,813.4 690.1,806.8 672.1,800.2 654,793.7 636,787.2 617.9,780.6 599.8,774.1 581.8,767.7 563.7,761.2 574.5,753.7 585.2,746.2 596,738.7Z" fill="#d3d3d3" stroke="none"/><path d="M606.7,731.2 596,738.7 585.2,746.2 574.5,753.7 563.7,761.2M624.8,737.7 614,745.2 603.3,752.7 592.5,760.2 581.8,767.7M642.8,744.1 632.1,751.6 621.3,759.1 610.6,766.6 599.8,774.1M660.9,750.6 650.1,758.1 639.4,765.6 628.6,773.1 617.9,780.6M679,757.2 668.2,764.7 657.5,772.2 646.7,779.7 636,787.2M697,763.7 686.3,771.2 675.5,778.7 664.8,786.2 654,793.7M715.1,770.2 704.3,777.7 693.6,785.2 682.8,792.7 672.1,800.2M733.1,776.8 722.4,784.3 711.6,791.8 700.9,799.3 690.1,806.8M751.2,783.4 740.5,790.9 729.7,798.4 719,805.9 708.2,813.4M769.3,790 758.5,797.5 747.8,805 737,812.5 726.3,820M787.3,796.7 776.6,804.2 765.8,811.7 755.1,819.2 744.3,826.7M805.4,803.3 794.6,810.8 783.9,818.3 773.1,825.8 762.4,833.3M823.5,810 812.7,817.5 802,825 791.2,832.5 780.5,840M841.5,816.7 830.8,824.2 820,831.7 809.3,839.2 798.5,846.7M859.6,823.4 848.8,830.9 838.1,838.4 827.3,845.9 816.6,853.4M877.6,830.1 866.9,837.6 856.1,845.1 845.4,852.6 834.6,860.1M895.7,836.9 885,844.4 874.2,851.9 863.5,859.4 852.7,866.9M606.7,731.2 624.8,737.7 642.8,744.1 660.9,750.6 679,757.2 697,763.7 715.1,770.2 733.1,776.8 751.2,783.4 769.3,790 787.3,796.7 805.4,803.3 823.5,810 841.5,816.7 859.6,823.4 877.6,830.1 895.7,836.9M596,738.7 614,745.2 632.1,751.6 650.1,758.1 668.2,764.7 686.3,771.2 704.3,777.7 722.4,784.3 740.5,790.9 758.5,797.5 776.6,804.2 794.6,810.8 812.7,817.5 830.8,824.2 848.8,830.9 866.9,837.6 885,844.4M585.2,746.2 603.3,752.7 621.3,759.1 639.4,765.6 657.5,772.2 675.5,778.7 693.6,785.2 711.6,791.8 729.7,798.4 747.8,805 765.8,811.7 783.9,818.3 802,825 820,831.7 838.1,838.4 856.1,845.1 874.2,851.9M574.5,753.7 592.5,760.2 610.6,766.6 628.6,773.1 646.7,779.7 664.8,786.2 682.8,792.7 700.9,799.3 719,805.9 737,812.5 755.1,819.2 773.1,825.8 791.2,832.5 809.3,839.2 827.3,845.9 845.4,852.6 863.5,859.4M563.7,761.2 581.8,767.7 599.8,774.1 617.9,780.6 636,787.2 654,793.7 672.1,800.2 690.1,806.8 708.2,813.4 726.3,820 744.3,826.7 762.4,833.3 780.5,840 798.5,846.7 816.6,853.4 834.6,860.1 852.7,866.9" fill="none" stroke="#000" stroke-width="1" stroke-linejoin="round"/><path d="M598.5,602.3 616.7,608.9 634.9,615.4 653.1,622 671.2,628.6 689.4,635.3 707.6,641.9 725.8,648.6 744,655.2 762.2,661.9 780.4,668.6 798.6,675.4 816.8,682.1 834.9,688.9 853.1,695.7 871.3,702.5 889.5,709.3 887.6,727.1 885.7,744.9 883.8,762.8 881.9,780.6 879.9,798.4 878,816.2 876.1,834.1 874.2,851.9 856.1,845.1 838.1,838.4 820,831.7 802,825 783.9,818.3 765.8,811.7 747.8,805 729.7,798.4 711.6,791.8 693.6,785.2 675.5,778.7 657.5,772.2 639.4,765.6 621.3,759.1 603.3,752.7 585.2,746.2 586.9,728.2 588.5,710.2 590.2,692.2 591.9,674.2 593.5,656.3 595.2,638.3 596.8,620.3Z" fill="#d3d3d3" stroke="none"/><path d="M598.5,602.3 596.8,620.3 595.2,638.3 593.5,656.3 591.9,674.2 590.2,692.2 588.5,710.2 586.9,728.2 585.2,746.2M616.7,608.9 615,626.8 613.3,644.8 611.7,662.8 610,680.8 608.3,698.7 606.6,716.7 604.9,734.7 603.3,752.7M634.9,615.4 633.2,633.4 631.5,651.4 629.8,669.3 628.1,687.3 626.4,705.2 624.7,723.2 623,741.2 621.3,759.1M653.1,622 651.4,640 649.6,657.9 647.9,675.9 646.2,693.8 644.5,711.8 642.8,729.7 641.1,747.7 639.4,765.6M671.2,628.6 669.5,646.6 667.8,664.5 666.1,682.5 664.4,700.4 662.6,718.3 660.9,736.3 659.2,754.2 657.5,772.2M689.4,635.3 687.7,653.2 686,671.1 684.2,689 682.5,707 680.7,724.9 679,742.8 677.3,760.8 675.5,778.7M707.6,641.9 705.9,659.8 704.1,677.7 702.4,695.7 700.6,713.6 698.8,731.5 697.1,749.4 695.3,767.3 693.6,785.2M725.8,648.6 724,666.5 722.3,684.4 720.5,702.3 718.7,720.2 717,738.1 715.2,756 713.4,773.9 711.6,791.8M744,655.2 742.2,673.1 740.4,691 738.6,708.9 736.9,726.8 735.1,744.7 733.3,762.6 731.5,780.5 729.7,798.4M762.2,661.9 760.4,679.8 758.6,697.7 756.8,715.6 755,733.5 753.2,751.4 751.4,769.3 749.6,787.1 747.8,805M780.4,668.6 778.6,686.5 776.7,704.4 774.9,722.3 773.1,740.2 771.3,758 769.5,775.9 767.6,793.8 765.8,811.7M798.6,675.4 796.7,693.2 794.9,711.1 793.1,729 791.2,746.9 789.4,764.7 787.6,782.6 785.7,800.5 783.9,818.3M816.8,682.1 814.9,700 813,717.8 811.2,735.7 809.4,753.6 807.5,771.4 805.7,789.3 803.8,807.1 802,825M834.9,688.9 833.1,706.7 831.2,724.6 829.3,742.4 827.5,760.3 825.6,778.1 823.7,796 821.9,813.8 820,831.7M853.1,695.7 851.2,713.5 849.4,731.4 847.5,749.2 845.6,767 843.7,784.9 841.8,802.7 840,820.6 838.1,838.4M871.3,702.5 869.4,720.3 867.5,738.1 865.6,756 863.7,773.8 861.8,791.6 859.9,809.5 858,827.3 856.1,845.1M889.5,709.3 887.6,727.1 885.7,744.9 883.8,762.8 881.9,780.6 879.9,798.4 878,816.2 876.1,834.1 874.2,851.9M598.5,602.3 616.7,608.9 634.9,615.4 653.1,622 671.2,628.6 689.4,635.3 707.6,641.9 725.8,648.6 744,655.2 762.2,661.9 780.4,668.6 798.6,675.4 816.8,682.1 834.9,688.9 853.1,695.7 871.3,702.5 889.5,709.3M596.8,620.3 615,626.8 633.2,633.4 651.4,640 669.5,646.6 687.7,653.2 705.9,659.8 724,666.5 742.2,673.1 760.4,679.8 778.6,686.5 796.7,693.2 814.9,700 833.1,706.7 851.2,713.5 869.4,720.3 887.6,727.1M595.2,638.3 613.3,644.8 631.5,651.4 649.6,657.9 667.8,664.5 686,671.1 704.1,677.7 722.3,684.4 740.4,691 758.6,697.7 776.7,704.4 794.9,711.1 813,717.8 831.2,724.6 849.4,731.4 867.5,738.1 885.7,744.9M593.5,656.3 611.7,662.8 629.8,669.3 647.9,675.9 666.1,682.5 684.2,689 702.4,695.7 720.5,702.3 738.6,708.9 756.8,715.6 774.9,722.3 793.1,729 811.2,735.7 829.3,742.4 847.5,749.2 865.6,756 883.8,762.8M591.9,674.2 610,680.8 628.1,687.3 646.2,693.8 664.4,700.4 682.5,707 700.6,713.6 718.7,720.2 736.9,726.8 755,733.5 773.1,740.2 791.2,746.9 809.4,753.6 827.5,760.3 845.6,767 863.7,773.8 881.9,780.6M590.2,692.2 608.3,698.7 626.4,705.2 644.5,711.8 662.6,718.3 680.7,724.9 698.8,731.5 717,738.1 735.1,744.7 753.2,751.4 771.3,758 789.4,764.7 807.5,771.4 825.6,778.1 843.7,784.9 861.8,791.6 879.9,798.4M588.5,710.2 606.6,716.7 624.7,723.2 642.8,729.7 660.9,736.3 679,742.8 697.1,749.4 715.2,756 733.3,762.6 751.4,769.3 769.5,775.9 787.6,782.6 805.7,789.3 823.7,796 841.8,802.7 859.9,809.5 878,816.2M586.9,728.2 604.9,734.7 623,741.2 641.1,747.7 659.2,754.2 677.3,760.8 695.3,767.3 713.4,773.9 731.5,780.5 749.6,787.1 767.6,793.8 785.7,800.5 803.8,807.1 821.9,813.8 840,820.6 858,827.3 876.1,834.1M585.2,746.2 603.3,752.7 621.3,759.1 639.4,765.6 657.5,772.2 675.5,778.7 693.6,785.2 711.6,791.8 729.7,798.4 747.8,805 765.8,811.7 783.9,818.3 802,825 820,831.7 838.1,838.4 856.1,845.1 874.2,851.9" fill="none" stroke="#000" stroke-width="1" stroke-linejoin="round"/><path d="M619.8,587.6 638,594.2 656.2,600.8 674.4,607.4 692.5,614 710.7,620.6 728.9,627.2 747.1,633.9 765.3,640.6 783.5,647.3 801.7,654 819.9,660.7 838,667.5 856.2,674.2 874.4,681 892.6,687.8 910.8,694.6 900.1,702 889.5,709.3 878.9,716.6 868.2,723.9 850,717.1 831.8,710.3 813.6,703.5 795.5,696.8 777.3,690 759.1,683.3 740.9,676.6 722.7,669.9 704.5,663.2 686.3,656.5 668.1,649.9 650,643.3 631.8,636.7 613.6,630.1 595.4,623.5 577.2,616.9 587.9,609.6 598.5,602.3 609.1,595Z" fill="#d3d3d3" stroke="none"/><path d="M619.8,587.6 609.1,595 598.5,602.3 587.9,609.6 577.2,616.9M638,594.2 627.3,601.5 616.7,608.9 606,616.2 595.4,623.5M656.2,600.8 645.5,608.1 634.9,615.4 624.2,622.8 613.6,630.1M674.4,607.4 663.7,614.7 653.1,622 642.4,629.3 631.8,636.7M692.5,614 681.9,621.3 671.2,628.6 660.6,636 650,643.3M710.7,620.6 700.1,627.9 689.4,635.3 678.8,642.6 668.1,649.9M728.9,627.2 718.3,634.6 707.6,641.9 697,649.2 686.3,656.5M747.1,633.9 736.5,641.2 725.8,648.6 715.2,655.9 704.5,663.2M765.3,640.6 754.6,647.9 744,655.2 733.4,662.6 722.7,669.9M783.5,647.3 772.8,654.6 762.2,661.9 751.5,669.3 740.9,676.6M801.7,654 791,661.3 780.4,668.6 769.7,676 759.1,683.3M819.9,660.7 809.2,668.1 798.6,675.4 787.9,682.7 777.3,690M838,667.5 827.4,674.8 816.8,682.1 806.1,689.5 795.5,696.8M856.2,674.2 845.6,681.6 834.9,688.9 824.3,696.2 813.6,703.5M874.4,681 863.8,688.4 853.1,695.7 842.5,703 831.8,710.3M892.6,687.8 882,695.2 871.3,702.5 860.7,709.8 850,717.1M910.8,694.6 900.1,702 889.5,709.3 878.9,716.6 868.2,723.9M619.8,587.6 638,594.2 656.2,600.8 674.4,607.4 692.5,614 710.7,620.6 728.9,627.2 747.1,633.9 765.3,640.6 783.5,647.3 801.7,654 819.9,660.7 838,667.5 856.2,674.2 874.4,681 892.6,687.8 910.8,694.6M609.1,595 627.3,601.5 645.5,608.1 663.7,614.7 681.9,621.3 700.1,627.9 718.3,634.6 736.5,641.2 754.6,647.9 772.8,654.6 791,661.3 809.2,668.1 827.4,674.8 845.6,681.6 863.8,688.4 882,695.2 900.1,702M598.5,602.3 616.7,608.9 634.9,615.4 653.1,622 671.2,628.6 689.4,635.3 707.6,641.9 725.8,648.6 744,655.2 762.2,661.9 780.4,668.6 798.6,675.4 816.8,682.1 834.9,688.9 853.1,695.7 871.3,702.5 889.5,709.3M587.9,609.6 606,616.2 624.2,622.8 642.4,629.3 660.6,636 678.8,642.6 697,649.2 715.2,655.9 733.4,662.6 751.5,669.3 769.7,676 787.9,682.7 806.1,689.5 824.3,696.2 842.5,703 860.7,709.8 878.9,716.6M577.2,616.9 595.4,623.5 613.6,630.1 631.8,636.7 650,643.3 668.1,649.9 686.3,656.5 704.5,663.2 722.7,669.9 740.9,676.6 759.1,683.3 777.3,690 795.5,696.8 813.6,703.5 831.8,710.3 850,717.1 868.2,723.9" fill="none" stroke="#000" stroke-width="1" stroke-linejoin="round"/></g><g shape-rendering="crispEdges"><path d="M578.6,609.5 L618.6,576.6 L621.6,583.7 L578.2,615.8 Z" fill="#d3d3d3" stroke="#000" stroke-width="1"/><path d="M583.6,605.4 L584.8,612.0M588.6,601.3 L589.8,607.9M593.6,597.2 L594.8,603.8M598.6,593.0 L599.8,599.6M603.6,588.9 L604.8,595.5M608.6,584.8 L609.8,591.4M613.6,580.7 L614.8,587.3" fill="none" stroke="#000" stroke-width="1"/><path d="M577.6,614.3 L621.9,582.2 M578.6,617.2 L622.6,585.2" fill="none" stroke="#000" stroke-width="1"/><path d="M566,593.6 L588.6,579.3 L591.2,587.6 L590.3,592.8 L576.5,604 L572.1,605 Z" fill="#8c8ce0"/><path d="M568.5,596 L587,584 L588.5,591 L576,601.5 L572.3,603 Z" fill="#4040f0"/><path d="M571,599.5 L585,590 L586,592.5 L575.5,601 L572.6,602 Z" fill="#0000ff"/><path d="M570.4,604 L573.5,603.2 L574.6,617.5 L571.6,617.8 Z" fill="#1414e6"/><path d="M561,621 L566,616 L570.5,618.5 L570.5,636 L565.5,644.5 L560.5,648 Z" fill="#8c8ce0"/><path d="M563,624 L568.5,620 L569.5,634 L565,641 L562.5,642.5 Z" fill="#3030f0"/><path d="M565.3,626 L567.3,625 L567.5,635.5 L565.6,636.5 Z" fill="#00d0f0"/><path d="M568.2,627.5 L569.6,626.8 L569.6,629.6 L568.2,630 Z" fill="#e8e800"/><path d="M566,593.6 L588.6,579.3 L595,590 M588.6,579.3 L590,567 M566,593.6 L557.5,600 M576.5,604 L590.3,592.8 L597,598 M572,605 L573.5,618 L566,644 L558,665" fill="none" stroke="#000" stroke-width="1"/><path d="M574.0,620.0 594.5,625.0 592.0,650.0 584.3,746.0 577.0,752.0 551.0,748.0 553.0,700.0 558.0,660.0 566.0,640.0Z" fill="#d3d3d3" stroke="#000" stroke-width="1"/><path d="M592.7,626.0 L594.3,626.0 L593.8,632.1 L592.2,632.1 ZM592.1,633.9 L593.7,633.9 L593.1,640.0 L591.5,640.0 ZM591.4,641.7 L593.0,641.7 L592.5,647.9 L590.9,647.9 ZM590.8,649.6 L592.4,649.6 L591.9,655.7 L590.3,655.7 ZM590.1,657.5 L591.7,657.5 L591.2,663.6 L589.6,663.6 ZM589.5,665.3 L591.1,665.3 L590.6,671.5 L589.0,671.5 ZM588.8,673.2 L590.4,673.2 L589.9,679.3 L588.3,679.3 ZM588.2,681.1 L589.8,681.1 L589.3,687.2 L587.7,687.2 ZM587.5,688.9 L589.1,688.9 L588.6,695.1 L587.0,695.1 ZM586.9,696.8 L588.5,696.8 L588.0,702.9 L586.4,702.9 ZM586.2,704.7 L587.8,704.7 L587.3,710.8 L585.7,710.8 ZM585.6,712.5 L587.2,712.5 L586.7,718.7 L585.1,718.7 ZM584.9,720.4 L586.5,720.4 L586.0,726.5 L584.4,726.5 ZM584.3,728.3 L585.9,728.3 L585.4,734.4 L583.8,734.4 ZM583.6,736.1 L585.2,736.1 L584.7,742.3 L583.1,742.3 Z" fill="#e4e4e4" stroke="#000" stroke-width="0.8"/><path d="M577.7,621.0 Q566.4,690.0 559.0,747.6M581.4,622.0 Q571.2,690.0 565.0,747.2M585.1,623.0 Q576.0,690.0 571.0,746.8M588.8,624.0 Q580.9,690.0 577.0,746.4M565.9,637.0 L579.9,629.0 L592.0,631.0M564.0,648.0 L578.0,640.0 L591.2,642.0M562.2,659.0 L576.2,651.0 L590.4,653.0M560.4,670.0 L574.4,662.0 L589.5,664.0M558.6,681.0 L572.6,673.0 L588.7,675.0M556.8,692.0 L570.8,684.0 L587.9,686.0M555.0,703.0 L569.0,695.0 L587.1,697.0M553.1,714.0 L567.1,706.0 L586.2,708.0M551.3,725.0 L565.3,717.0 L585.4,719.0M549.5,736.0 L563.5,728.0 L584.6,730.0M547.7,747.0 L561.7,739.0 L583.8,741.0" fill="none" stroke="#000" stroke-width="0.9"/><path d="M576.3,644.5 L584.0,629.1M578.4,650.1 L587.6,631.9M582.0,652.9 L589.7,637.5M582.5,653.0 L576.6,636.1M586.6,651.3 L579.4,630.7M589.4,645.9 L583.5,629.0" fill="none" stroke="#000" stroke-width="0.9"/><path d="M561.8,716.3 L569.8,700.3M562.0,728.6 L575.4,701.7M564.1,736.8 L578.9,707.2M567.6,742.3 L581.0,715.4M573.2,743.7 L581.2,727.7M565.2,739.1 L562.1,729.2M572.6,743.9 L562.5,712.3M577.3,740.0 L565.7,704.0M580.5,731.7 L570.4,700.1M580.9,714.8 L577.8,704.9" fill="none" stroke="#000" stroke-width="0.9"/><path d="M566.7,717.2 L572.0,714.0M564.6,724.3 L576.3,717.3M564.9,730.0 L578.1,722.0M566.7,734.7 L578.4,727.7M571.0,738.0 L576.3,734.8" fill="none" stroke="#000" stroke-width="0.9"/><ellipse cx="578.6" cy="634.6" rx="2.6" ry="3.4" fill="#0a3cff"/><path d="M576.2,748.6 L581.5,744.2 L583.2,745.2 L583.6,740 L584.9,740.2 L584.6,747.2 L577.5,750 Z" fill="#1090ff"/><path d="M576.2,748.6 L581.5,744.2 L582.3,745.6 L577.2,749.6 Z" fill="#20c8ff"/><path d="M571.3,727.2 L595.7,733.9" fill="none" stroke="#b8b8b8" stroke-width="1.3"/><path d="M596.5,734.3 L592.5,734.6 L593.6,731.6 Z" fill="#b8b8b8"/><path d="M558.5,760 L564.5,757 L564.3,766.5 L558.8,770.5 Z" fill="#d3d3d3" stroke="#000" stroke-width="0.9"/><path d="M564.5,757 L580,747.5 M565.6,759 L581,749.5" fill="none" stroke="#000" stroke-width="0.9" stroke-dasharray="2.2 0.8"/><path d="M394.6,558.5 L400.7,557 L400.7,726.5 L394.6,728 Z" fill="#d3d3d3" stroke="#000" stroke-width="1"/><path d="M394.8,585 L394.8,715" fill="none" stroke="#000" stroke-width="2"/><path d="M394.6,570 L400.7,566M394.6,585 L400.7,581M394.6,600 L400.7,596M394.6,615 L400.7,611M394.6,630 L400.7,626M394.6,645 L400.7,641M394.6,660 L400.7,656M394.6,675 L400.7,671M394.6,690 L400.7,686M394.6,705 L400.7,701M394.6,720 L400.7,716" fill="none" stroke="#000" stroke-width="0.9"/><path d="M411.5,557 L421,579 L418,603 L411,623 L403.5,601 L405,579 ZM411.5,557 L411,545 M411,623 L412,637 M421,579 L422,569 M403.5,601 L400.7,609 M418,603 L422,609 M405,579 L400.7,585" fill="none" stroke="#000" stroke-width="0.9"/><path d="M404.6,595.0 L413.7,576.8M406.2,602.5 L416.8,581.5M409.3,607.2 L418.4,589.0M412.6,607.8 L404.7,588.0M416.2,603.8 L406.8,580.2M418.3,596.0 L410.4,576.2" fill="none" stroke="#000" stroke-width="0.9"/><path d="M411.5,656 L421,678 L418,702 L411,722 L403.5,700 L405,678 ZM411.5,656 L411,644 M411,722 L412,736 M421,678 L422,668 M403.5,700 L400.7,708 M418,702 L422,708 M405,678 L400.7,684" fill="none" stroke="#000" stroke-width="0.9"/><path d="M404.6,694.0 L413.7,675.8M406.2,701.5 L416.8,680.5M409.3,706.2 L418.4,688.0M412.6,706.8 L404.7,687.0M416.2,702.8 L406.8,679.2M418.3,695.0 L410.4,675.2" fill="none" stroke="#000" stroke-width="0.9"/><path d="M392.5,720.5 a1.2,1.2 0 1 0 0.1,0 M392,724 L396,721" fill="none" stroke="#000" stroke-width="0.8"/></g><path d="M577.5,629.6 L650.2,646.6 L649.6,645 L668.9,652.3 L652.4,656.8 L651.5,651.2 L576.8,633.8 Z" fill="#adff2f"/><path d="M895.3,712.3 L903.9,707.3 L904.6,759.2 L908,759.4 L900.2,783.6 L891.3,770.9 L895.4,768.6 Z" fill="#7fff00" stroke="#000" stroke-width="1" shape-rendering="crispEdges"/><line x1="904.2" y1="707.5" x2="904.6" y2="759" stroke="#000" stroke-width="1.8" /><path d="M901.3,722.4 A22.3,26.8 0 0 1 917.7,770.1" fill="none" stroke="#000" stroke-width="9.8"/><path d="M901.3,722.4 A22.3,26.8 0 0 1 917.7,770.1" fill="none" stroke="#7fff00" stroke-width="7.8"/><path d="M897.4,723.6 L903.2,718.6 L904.6,727.6 Z" fill="#7fff00" stroke="#000" stroke-width="0.8"/><path d="M902.3,774.2 L914.8,770.6 L908.6,778 Z" fill="#7fff00" stroke="#000" stroke-width="0.9"/><rect x="699.3" y="646.1" width="46.5" height="14.5" fill="#9c9c9c" fill-opacity="0.78"/><text x="700.9" y="657.2" font-size="10.8" fill="#101010" textLength="39.9" lengthAdjust="spacingAndGlyphs" stroke="#101010" stroke-width="0.25">B2: 81.6</text><rect x="606.7" y="722.5" width="45.8" height="14.1" fill="#9c9c9c" fill-opacity="0.78"/><text x="608.3" y="733.5" font-size="10.8" fill="#101010" textLength="39.2" lengthAdjust="spacingAndGlyphs" stroke="#101010" stroke-width="0.25">B4: 22.5</text><rect x="378.2" y="568.9" width="45.6" height="13.9" fill="#9c9c9c" fill-opacity="0.78"/><text x="379.8" y="579.9" font-size="10.8" fill="#101010" textLength="39.2" lengthAdjust="spacingAndGlyphs" stroke="#101010" stroke-width="0.25">B5: 17.0</text><rect x="899" y="682.2" width="30" height="14.6" fill="#9c9c9c" fill-opacity="0.78"/><text x="901.3" y="692.9" font-size="10.8" fill="#101010" textLength="25.0" lengthAdjust="spacingAndGlyphs" stroke="#101010" stroke-width="0.25">-15.0</text><rect x="916.1" y="757" width="25.8" height="14.6" fill="#9c9c9c" fill-opacity="0.78"/><text x="918.1" y="767.9" font-size="10.8" fill="#101010" textLength="20.9" lengthAdjust="spacingAndGlyphs" stroke="#101010" stroke-width="0.25">30.0</text><text x="9" y="215.6" font-size="12" fill="#1e1e1e" textLength="42" lengthAdjust="spacingAndGlyphs">Analysis</text><text x="88.2" y="215.6" font-size="12" fill="#1e1e1e" textLength="37.2" lengthAdjust="spacingAndGlyphs">100.0%</text><path d="M62,212.3 L64.2,210.0 L67.5,213.6 L75.3,204.2 L77.4,206.2 L67.6,218.6 Z" fill="#7cc47c"/><text x="9" y="236.7" font-size="12" fill="#1e1e1e" textLength="31.1" lengthAdjust="spacingAndGlyphs">Plates</text><text x="87.5" y="236.7" font-size="12" fill="#1e1e1e" textLength="55.4" lengthAdjust="spacingAndGlyphs">0.9 &lt; 5.0%</text><path d="M62,233.4 L64.2,231.1 L67.5,234.7 L75.3,225.29999999999998 L77.4,227.29999999999998 L67.6,239.7 Z" fill="#7cc47c"/><text x="9" y="257.7" font-size="12" fill="#1e1e1e" textLength="25.7" lengthAdjust="spacingAndGlyphs">Bolts</text><text x="90.7" y="257.7" font-size="12" fill="#1e1e1e" textLength="65.6" lengthAdjust="spacingAndGlyphs">90.3 &lt; 100%</text><path d="M62,254.4 L64.2,252.1 L67.5,255.7 L75.3,246.29999999999998 L77.4,248.29999999999998 L67.6,260.7 Z" fill="#7cc47c"/><text x="9" y="278.7" font-size="12" fill="#1e1e1e" textLength="31.8" lengthAdjust="spacingAndGlyphs">Welds</text><text x="90.7" y="278.7" font-size="12" fill="#1e1e1e" textLength="65.6" lengthAdjust="spacingAndGlyphs">98.6 &lt; 100%</text><path d="M62,275.4 L64.2,273.1 L67.5,276.7 L75.3,267.29999999999995 L77.4,269.29999999999995 L67.6,281.7 Z" fill="#7cc47c"/><text x="865" y="215.6" font-size="12" fill="#f26f21" textLength="89" lengthAdjust="spacingAndGlyphs" font-weight="bold">Production cost</text><text x="959.5" y="215.6" font-size="12" fill="#1e1e1e" textLength="3.5" lengthAdjust="spacingAndGlyphs" font-weight="bold">-</text><text x="969" y="215.6" font-size="12" fill="#111" textLength="23" lengthAdjust="spacingAndGlyphs" font-weight="bold">28 €</text><defs><radialGradient id="ring" cx="0.55" cy="0.75" r="0.7"><stop offset="0" stop-color="#a8a8a8"/><stop offset="1" stop-color="#c2c2c2"/></radialGradient><radialGradient id="ringin" cx="0.5" cy="0.45" r="0.6"><stop offset="0.55" stop-color="#fff"/><stop offset="1" stop-color="#d8d8d8"/></radialGradient></defs><ellipse cx="1061.2" cy="262.6" rx="42" ry="21.6" fill="url(#ring)"/><ellipse cx="1060.5" cy="259" rx="32" ry="15.5" fill="url(#ringin)"/><polygon points="1055.2,217.5 1032.5,226.9 1035.4,262.8 1068.4,274.6 1084.9,257.6 1087.3,222.7" fill="#646464"/><polygon points="1055.2,217.5 1032.5,226.9 1069.3,234 1087.3,222.7" fill="#606060"/><polygon points="1069.3,234 1087.3,222.7 1084.9,257.6 1068.4,274.6" fill="#5e5e5e"/><path d="M1055.2,217.5 L1055.8,248.5 L1035.4,262.8 M1055.8,248.5 L1084.9,257.6" fill="none" stroke="#7a7a7a" stroke-width="0.7"/><path d="M1055.2,217.5 L1032.5,226.9 L1069.3,234 L1087.3,222.7 Z M1032.5,226.9 L1035.4,262.8 L1068.4,274.6 L1084.9,257.6 L1087.3,222.7 M1069.3,234 L1068.4,274.6" fill="none" stroke="#0a0a0a" stroke-width="1.4" stroke-linejoin="round"/><text x="1047" y="254" font-size="7.5" fill="#fff" font-weight="bold" font-style="italic" transform="rotate(12 1050 252)">+Y</text><path d="M1059.5,225.6 L1064.5,224.2" fill="none" stroke="#fff" stroke-width="1.3"/><path d="M1078.5,244.5 L1079.5,248 M1077.5,249.5 L1079.8,249" fill="none" stroke="#fff" stroke-width="1.3"/><path d="M1023,249.5 L1033,246.8 M1028.5,246 L1031,250 M1031.5,245.5 L1029,250.5" fill="none" stroke="#222" stroke-width="1"/><path d="M1092,267 L1103,270.5" fill="none" stroke="#222" stroke-width="0.9" stroke-dasharray="2 1.3"/><circle cx="1103.3" cy="270.8" r="1.2" fill="#222"/><path d="M1028.5,282.5 L1035,275.8 L1035.8,273.5 M1035,277 L1043,276" fill="none" stroke="#222" stroke-width="1.6"/><text x="1068" y="314.5" font-size="14" fill="#1e1e1e" textLength="23" lengthAdjust="spacingAndGlyphs">[%]</text><rect x="1064.6" y="347.5" width="26" height="15.49" fill="#a80000"/><rect x="1064.6" y="362.69" width="26" height="15.49" fill="#dc0000"/><rect x="1064.6" y="377.88" width="26" height="15.49" fill="#ff0000"/><rect x="1064.6" y="393.07" width="26" height="15.49" fill="#ff4000"/><rect x="1064.6" y="408.26" width="26" height="15.49" fill="#ff7800"/><rect x="1064.6" y="423.45" width="26" height="15.49" fill="#ffa800"/><rect x="1064.6" y="438.64" width="26" height="15.49" fill="#ffc800"/><rect x="1064.6" y="453.83" width="26" height="15.49" fill="#ffe600"/><rect x="1064.6" y="469.02" width="26" height="15.49" fill="#dce600"/><rect x="1064.6" y="484.21" width="26" height="15.49" fill="#7ea800"/><rect x="1064.6" y="499.4" width="26" height="15.49" fill="#2a7800"/><rect x="1064.6" y="514.59" width="26" height="15.49" fill="#008040"/><rect x="1064.6" y="529.78" width="26" height="15.49" fill="#00b48c"/><rect x="1064.6" y="544.97" width="26" height="15.49" fill="#00f0e0"/><rect x="1064.6" y="560.16" width="26" height="15.49" fill="#00c0ff"/><rect x="1064.6" y="575.35" width="26" height="15.49" fill="#0064ff"/><rect x="1064.6" y="590.54" width="26" height="15.49" fill="#0000ff"/><rect x="1064.6" y="605.73" width="26" height="15.49" fill="#4040f0"/><rect x="1064.6" y="620.92" width="26" height="15.49" fill="#8c8ce0"/><rect x="1064.6" y="636.11" width="26" height="15.49" fill="#d3d3d3"/><rect x="1064.6" y="347.5" width="26" height="303.8" fill="none" stroke="#111" stroke-width="1"/><line x1="1056.5" y1="347.5" x2="1064.6" y2="347.5" stroke="#111" stroke-width="1" /><text x="1049" y="345.3" font-size="12.5" fill="#1e1e1e" text-anchor="end">1.600</text><line x1="1056.5" y1="385.5" x2="1064.6" y2="385.5" stroke="#111" stroke-width="1" /><text x="1049" y="383.3" font-size="12.5" fill="#1e1e1e" text-anchor="end">1.40</text><line x1="1056.5" y1="423.4" x2="1064.6" y2="423.4" stroke="#111" stroke-width="1" /><text x="1049" y="421.2" font-size="12.5" fill="#1e1e1e" text-anchor="end">1.20</text><line x1="1056.5" y1="461.4" x2="1064.6" y2="461.4" stroke="#111" stroke-width="1" /><text x="1049" y="459.2" font-size="12.5" fill="#1e1e1e" text-anchor="end">1.00</text><line x1="1056.5" y1="499.4" x2="1064.6" y2="499.4" stroke="#111" stroke-width="1" /><text x="1049" y="497.2" font-size="12.5" fill="#1e1e1e" text-anchor="end">0.80</text><line x1="1056.5" y1="537.4" x2="1064.6" y2="537.4" stroke="#111" stroke-width="1" /><text x="1049" y="535.1" font-size="12.5" fill="#1e1e1e" text-anchor="end">0.60</text><line x1="1056.5" y1="575.3" x2="1064.6" y2="575.3" stroke="#111" stroke-width="1" /><text x="1049" y="573.1" font-size="12.5" fill="#1e1e1e" text-anchor="end">0.40</text><line x1="1056.5" y1="613.3" x2="1064.6" y2="613.3" stroke="#111" stroke-width="1" /><text x="1049" y="611.1" font-size="12.5" fill="#1e1e1e" text-anchor="end">0.20</text><line x1="1056.5" y1="651.3" x2="1064.6" y2="651.3" stroke="#111" stroke-width="1" /><text x="1049" y="663.3" font-size="12.5" fill="#1e1e1e" text-anchor="end">0.000</text><rect x="0" y="61" width="1920" height="96" fill="#fff"/><rect x="6" y="67" width="204" height="30" fill="#f26f21"/><text x="12.5" y="87.5" font-size="12.5" fill="#fff" textLength="31" lengthAdjust="spacingAndGlyphs">CON1</text><path d="M200,81 L205,81 L202.5,84 Z" fill="#fff"/><text x="13" y="113.75" font-size="11.6" fill="#3a3a3a" textLength="19.5" lengthAdjust="spacingAndGlyphs">EPS</text><text x="44" y="113.75" font-size="11.6" fill="#f26f21" textLength="14" lengthAdjust="spacingAndGlyphs" font-weight="bold">ST</text><text x="70.5" y="113.75" font-size="11.6" fill="#3a3a3a" textLength="15.0" lengthAdjust="spacingAndGlyphs">CD</text><text x="99.5" y="113.75" font-size="11.6" fill="#3a3a3a" textLength="15.0" lengthAdjust="spacingAndGlyphs">DR</text><text x="128.5" y="113.75" font-size="11.6" fill="#3a3a3a" textLength="17.5" lengthAdjust="spacingAndGlyphs">FAT</text><text x="160.5" y="113.75" font-size="11.6" fill="#3a3a3a" textLength="15.5" lengthAdjust="spacingAndGlyphs">FIR</text><text x="190.5" y="113.75" font-size="11.6" fill="#3a3a3a" textLength="15.5" lengthAdjust="spacingAndGlyphs">HT</text><text x="111" y="149.6" font-size="11.6" fill="#f7b48c" textLength="74.5" lengthAdjust="spacingAndGlyphs" font-weight="bold">Project items</text><text x="221.5" y="113.75" font-size="11.6" fill="#3a3a3a" textLength="23.3" lengthAdjust="spacingAndGlyphs">New</text><text x="257.5" y="113.75" font-size="11.6" fill="#3a3a3a" textLength="27.5" lengthAdjust="spacingAndGlyphs">Copy</text><rect x="294" y="63" width="5" height="92" fill="#c8c8c8"/><text x="328.7" y="83.6" font-size="11.6" fill="#3a3a3a" textLength="27.8" lengthAdjust="spacingAndGlyphs">Undo</text><text x="328.7" y="105.6" font-size="11.6" fill="#b0b0b0" textLength="25.7" lengthAdjust="spacingAndGlyphs">Redo</text><text x="328.3" y="127.6" font-size="11.6" fill="#3a3a3a" textLength="23.7" lengthAdjust="spacingAndGlyphs">Save</text><text x="322" y="149.5" font-size="11.6" fill="#a8a8a8" textLength="22.4" lengthAdjust="spacingAndGlyphs">Data</text><rect x="364.79999999999995" y="63" width="1.2" height="92" fill="#b8b8b8"/><rect x="507.9" y="63" width="1.2" height="92" fill="#b8b8b8"/><rect x="598.8" y="63" width="1.2" height="92" fill="#b8b8b8"/><rect x="874.0" y="63" width="1.2" height="92" fill="#b8b8b8"/><rect x="1255.9" y="63" width="1.2" height="92" fill="#b8b8b8"/><rect x="372" y="67" width="56" height="69.5" fill="#c8c8c8"/><text x="375.6" y="113.75" font-size="11.6" fill="#3a3a3a" textLength="48.8" lengthAdjust="spacingAndGlyphs">Members</text><text x="432.5" y="113.75" font-size="11.6" fill="#3a3a3a" textLength="30.3" lengthAdjust="spacingAndGlyphs">Plates</text><text x="475.6" y="113.75" font-size="11.6" fill="#3a3a3a" textLength="19.4" lengthAdjust="spacingAndGlyphs">LCS</text><text x="422.8" y="149.5" font-size="11.6" fill="#a8a8a8" textLength="32.0" lengthAdjust="spacingAndGlyphs">Labels</text><text x="522.5" y="113.75" font-size="11.6" fill="#3a3a3a" textLength="23.1" lengthAdjust="spacingAndGlyphs">New</text><text x="556.5" y="113.75" font-size="11.6" fill="#3a3a3a" textLength="35.5" lengthAdjust="spacingAndGlyphs">Gallery</text><text x="534.8" y="149.5" font-size="11.6" fill="#a8a8a8" textLength="40.8" lengthAdjust="spacingAndGlyphs">Pictures</text><text x="611.3" y="113.75" font-size="11.6" fill="#3a3a3a" textLength="27.7" lengthAdjust="spacingAndGlyphs">Code</text><text x="611.3" y="125.7" font-size="11.6" fill="#3a3a3a" textLength="28.1" lengthAdjust="spacingAndGlyphs">setup</text><text x="647.8" y="113.75" font-size="11.6" fill="#3a3a3a" textLength="47.8" lengthAdjust="spacingAndGlyphs">Calculate</text><text x="702.8" y="113.75" font-size="11.6" fill="#3a3a3a" textLength="36.0" lengthAdjust="spacingAndGlyphs">Overall</text><text x="706" y="125.7" font-size="11.6" fill="#3a3a3a" textLength="30" lengthAdjust="spacingAndGlyphs">check</text><text x="746.3" y="113.75" font-size="11.6" fill="#3a3a3a" textLength="29.3" lengthAdjust="spacingAndGlyphs">Strain</text><text x="747" y="125.7" font-size="11.6" fill="#3a3a3a" textLength="30" lengthAdjust="spacingAndGlyphs">check</text><rect x="780.8" y="67.8" width="88.6" height="24.4" fill="#e6e6e6" stroke="#b4b4b4" stroke-width="1.3"/><text x="785.6" y="84.8" font-size="12.5" fill="#a8a8a8" textLength="16.5" lengthAdjust="spacingAndGlyphs">LE1</text><path d="M858,77.8 L863.6,77.8 L860.8,81.6 Z" fill="#9a9a9a"/><rect x="780.8" y="93.8" width="88.6" height="24.4" fill="#fff" stroke="#b4b4b4" stroke-width="1.3"/><text x="785.6" y="110.7" font-size="12" fill="#333" textLength="62.4" lengthAdjust="spacingAndGlyphs">For extreme</text><path d="M858,103.6 L863.6,103.6 L860.8,107.6 Z" fill="#444"/><text x="719.8" y="149.5" font-size="11.6" fill="#a8a8a8" textLength="36.7" lengthAdjust="spacingAndGlyphs">CBFEM</text><clipPath id="ceq"><rect x="880" y="100" width="56.3" height="30"/></clipPath><g clip-path="url(#ceq)"><text x="884.8" y="113.75" font-size="11.6" fill="#3a3a3a" textLength="56.2" lengthAdjust="spacingAndGlyphs">Equivalent</text></g><text x="897.5" y="125.7" font-size="11.6" fill="#3a3a3a" textLength="28.1" lengthAdjust="spacingAndGlyphs">stress</text><rect x="940.6" y="67.2" width="42" height="68" fill="#c8c8c8"/><text x="945.6" y="113.75" font-size="11.6" fill="#3a3a3a" textLength="32.9" lengthAdjust="spacingAndGlyphs">Plastic</text><text x="948.5" y="125.7" font-size="11.6" fill="#3a3a3a" textLength="27.8" lengthAdjust="spacingAndGlyphs">strain</text><clipPath id="csc"><rect x="985" y="100" width="42.3" height="30"/></clipPath><g clip-path="url(#csc)"><text x="986.9" y="113.75" font-size="11.6" fill="#3a3a3a" textLength="42.7" lengthAdjust="spacingAndGlyphs">Stress in</text><text x="986.5" y="125.7" font-size="11.6" fill="#3a3a3a" textLength="42.0" lengthAdjust="spacingAndGlyphs">contacts</text></g><rect x="1031.6" y="67.2" width="137.2" height="68" fill="#c8c8c8"/><text x="1042.5" y="113.75" font-size="11.6" fill="#3a3a3a" textLength="20.0" lengthAdjust="spacingAndGlyphs">Bolt</text><text x="1036.3" y="125.7" font-size="11.6" fill="#3a3a3a" textLength="31.2" lengthAdjust="spacingAndGlyphs">forces</text><text x="1076.6" y="113.75" font-size="11.6" fill="#3a3a3a" textLength="27.8" lengthAdjust="spacingAndGlyphs">Mesh</text><text x="1112.5" y="113.75" font-size="11.6" fill="#3a3a3a" textLength="51.9" lengthAdjust="spacingAndGlyphs">Deformed</text><text x="1039.8" y="149.5" font-size="11.6" fill="#a8a8a8" textLength="55.2" lengthAdjust="spacingAndGlyphs">FE analysis</text><rect x="1170" y="67.8" width="81.3" height="24.6" fill="#fff" stroke="#b4b4b4" stroke-width="1.2"/><text x="1200" y="84.8" font-size="12.6" fill="#333" textLength="28.8" lengthAdjust="spacingAndGlyphs">10.00</text><path d="M1240,75.7 L1246,75.7 L1243,71.8 Z" fill="#333"/><path d="M1240,84.5 L1246,84.5 L1243,88.4 Z" fill="#333"/><rect x="222.2" y="72.2" width="22" height="27.8" fill="#fff" rx="2" stroke="#6a6a6a" stroke-width="1.6"/><path d="M228,86 L233.7,91 L239.5,86" fill="none" stroke="#6a6a6a" stroke-width="1.8"/><rect x="226" y="91" width="15" height="3" fill="#6a6a6a"/><path d="M222.3,70.5 h4.6 v5 h5 v4.6 h-5 v5 h-4.6 v-5 h-5 v-4.6 h5 Z" fill="#5b9ce6"/><path d="M266,72.2 L277,72.2 Q279,72.2 279,74 L279,80 M266,72.2 L260,78.5 L260,93 Q260,95 262,95 L266,95" fill="none" stroke="#6a6a6a" stroke-width="1.6"/><path d="M266,72.5 L266,78.5 L260.3,78.5 Z" fill="#6a6a6a"/><path d="M273,82 L280.5,82 Q282.3,82 282.3,84 L282.3,98 Q282.3,100 280.3,100 L269,100 Q267,100 267,98 L267,88 Z" fill="#fff" stroke="#6a6a6a" stroke-width="1.6"/><path d="M273,82 L273,88 L267,88 Z" fill="#6a6a6a"/><path d="M270.5,90 L274.7,93.6 L279,90" fill="none" stroke="#6a6a6a" stroke-width="1.5"/><rect x="269.5" y="93.8" width="10.5" height="2.4" fill="#6a6a6a"/><path d="M309,83.5 L309,77 L315.5,83.5 Z" fill="#1a1a1a"/><path d="M311.5,81.5 Q316,74.5 322,82.5" fill="none" stroke="#1a1a1a" stroke-width="2.2"/><path d="M323,105.5 L323,99 L316.5,105.5 Z" fill="#b5b5b5"/><path d="M320.5,103.5 Q316,96.5 310,104.5" fill="none" stroke="#b5b5b5" stroke-width="2.2"/><path d="M308.7,116.7 L323.3,116.7 L323.3,131.3 L311,131.3 L308.7,129 Z" fill="#fff" stroke="#555" stroke-width="1.3"/><rect x="311.5" y="116.7" width="8.5" height="6" fill="#fff" stroke="#555" stroke-width="1.2"/><rect x="312.3" y="126.3" width="6.5" height="5" fill="#fff" stroke="#555" stroke-width="1.2"/><rect x="313.8" y="128" width="1.6" height="2.2" fill="#555"/><rect x="389" y="77.2" width="23" height="4.6" fill="#3c3c3c"/><rect x="389" y="78.7" width="23" height="0.5" fill="#b0b0b0"/><rect x="389" y="80.4" width="23" height="0.5" fill="#b0b0b0"/><rect x="389" y="90.6" width="23" height="4.6" fill="#3c3c3c"/><rect x="389" y="92.1" width="23" height="0.5" fill="#b0b0b0"/><rect x="389" y="93.8" width="23" height="0.5" fill="#b0b0b0"/><line x1="389.5" y1="76.3" x2="389.5" y2="81.8" stroke="#333" stroke-width="1.3" /><line x1="411.5" y1="76.3" x2="411.5" y2="81.8" stroke="#333" stroke-width="1.3" /><line x1="389.5" y1="90" x2="389.5" y2="95.6" stroke="#333" stroke-width="1.3" /><line x1="411.5" y1="90" x2="411.5" y2="95.6" stroke="#333" stroke-width="1.3" /><path d="M389.5,81.5 L389.5,84.5 L385,86 L392,87 L389.5,88.5 L389.5,90.5" fill="none" stroke="#333" stroke-width="1.1"/><path d="M411.5,81.5 L411.5,84 L415.5,85.5 L409,86.8 L411.5,88.3 L411.5,90.5" fill="none" stroke="#333" stroke-width="1.1"/><rect x="439.2" y="73.8" width="15.8" height="23.8" fill="#fff" rx="1" stroke="#3c3c3c" stroke-width="1.6"/><circle cx="442.3" cy="77.8" r="1.5" fill="#fff" stroke="#3c3c3c" stroke-width="0.9"/><circle cx="452" cy="77.8" r="1.5" fill="#fff" stroke="#3c3c3c" stroke-width="0.9"/><circle cx="442.3" cy="93.7" r="1.5" fill="#fff" stroke="#3c3c3c" stroke-width="0.9"/><circle cx="452" cy="93.7" r="1.5" fill="#fff" stroke="#3c3c3c" stroke-width="0.9"/><path d="M481.3,89 L481.3,75 M481.3,89 L496,89 M481.3,89 L472,98.2" fill="none" stroke="#6a6a6a" stroke-width="1.4"/><path d="M481.3,70.8 L485,76.2 L477.6,76.2 Z" fill="#6a6a6a"/><path d="M500.3,89 L495,92.7 L495,85.3 Z" fill="#6a6a6a"/><path d="M469,101 L470.6,94.6 L475.4,99.4 Z" fill="#6a6a6a"/><rect x="522.5" y="70.3" width="26.2" height="26.2" fill="#ececec" stroke="#a9b5cf" stroke-width="1"/><rect x="518" y="75.3" width="26.7" height="26.2" fill="#ececec" stroke="#a9b5cf" stroke-width="1"/><path d="M520.3,95.5 L527,84.5 L530,88 L536.5,81 L542.7,95.5 Z" fill="none" stroke="#f47a30" stroke-width="1.1"/><path d="M523.3,70.3 h5 v5.4 h5.4 v5 h-5.4 v5.4 h-5 v-5.4 h-5.4 v-5 h5.4 Z" fill="#4e80c4"/><rect x="562.5" y="70.3" width="26.2" height="26.2" fill="#ececec" stroke="#a9b5cf" stroke-width="1"/><rect x="558" y="75.3" width="26.7" height="26.2" fill="#ececec" stroke="#a9b5cf" stroke-width="1"/><path d="M560.3,95.5 L567,84.5 L570,88 L576.5,81 L582.7,95.5 Z" fill="none" stroke="#f47a30" stroke-width="1.1"/><circle cx="563.8" cy="81" r="1.7" fill="none" stroke="#f47a30" stroke-width="1"/><path d="M624.05,81.78 L639.4,96.3 L635.2,100.6 L620.08,85.75 A7.3,7.3 0 0 1 610.56,81.8 L616.3,81.8 L616.3,76.2 L610.56,76.2 A7.3,7.3 0 0 1 624.05,81.78 Z" fill="#fff" stroke="#686868" stroke-width="1.5" stroke-linejoin="round"/><line x1="659.3" y1="71" x2="659.3" y2="99.5" stroke="#111" stroke-width="1.8" /><line x1="683" y1="71" x2="683" y2="99.5" stroke="#111" stroke-width="1.8" /><rect x="656.3" y="99" width="6.2" height="1.8" fill="#111"/><rect x="680" y="99" width="6.2" height="1.8" fill="#111"/><line x1="659.3" y1="75.6" x2="683" y2="75.6" stroke="#111" stroke-width="1.2" /><ellipse cx="665.5" cy="75.6" rx="1.6" ry="2.1" fill="#111"/><ellipse cx="671" cy="75.6" rx="1.6" ry="2.1" fill="#f26f21"/><ellipse cx="676" cy="75.6" rx="1.6" ry="2.1" fill="#111"/><line x1="659.3" y1="84.6" x2="683" y2="84.6" stroke="#111" stroke-width="1.2" /><ellipse cx="670.5" cy="84.6" rx="1.6" ry="2.1" fill="#111"/><ellipse cx="676" cy="84.6" rx="1.6" ry="2.1" fill="#f26f21"/><line x1="659.3" y1="93.5" x2="683" y2="93.5" stroke="#111" stroke-width="1.2" /><ellipse cx="667" cy="93.5" rx="1.6" ry="2.1" fill="#f26f21"/><ellipse cx="672" cy="93.5" rx="1.6" ry="2.1" fill="#111"/><ellipse cx="677.5" cy="93.5" rx="1.6" ry="2.1" fill="#f26f21"/><path d="M705.2,76 L711.1,71.5 L712.2,73.5 L708.5,76.3 L708.5,97.5 L705.2,98.8 Z" fill="#e01818"/><path d="M707.3,77 L711.4,73.6 L714.4,75.6 L714.4,98 L707.3,98 Z" fill="#8e1414"/><path d="M705.2,98.8 L708.5,97.5 L714.4,98 L709,100 Z" fill="#e01818"/><path d="M714.6,78 L719.5,74.1 L719.5,96.3 L714.6,101.5 Z" fill="#4a3010" stroke="#f5a623" stroke-width="0.8"/><path d="M715.8,80.4 L730.8,82.75 L730.8,89.3 L715.8,87.4 Z" fill="#7da82c"/><path d="M714.8,87.9 L730.8,89.8 L734.1,87 L731.5,90.9 L725.6,91.9 L714.8,89.6 Z" fill="#8ee01e"/><path d="M714.8,79 L719.5,75.1 L734.1,78.5 L730.8,82.3 Z" fill="#8c8c8c"/><path d="M714.8,79 L730.8,82.3 L730.8,83.3 L714.8,80 Z" fill="#dcdcdc"/><path d="M747.3,99.4 L747.3,72 M745.2,74.5 L747.3,71.3 L749.4,74.5 M747.3,99.4 L775.5,99.4 M773,97.3 L776.2,99.4 L773,101.5" fill="none" stroke="#111" stroke-width="1.1"/><path d="M748,98.8 L754,83.4 L765,83.4 L759,98.8 Z" fill="#00c060"/><path d="M759,98.8 L765,83.4 L772.6,83.4 L772.6,98.8 Z" fill="#ff0000"/><line x1="748" y1="83.4" x2="754" y2="83.4" stroke="#888" stroke-width="0.7" stroke-dasharray="1 1"/><line x1="754" y1="83.2" x2="772.6" y2="83.2" stroke="#222" stroke-width="0.8" /><path d="M898.5,99.4 L898.5,72 M896.4,74.5 L898.5,71.3 L900.6,74.5" fill="none" stroke="#f47a30" stroke-width="1.1"/><path d="M898.5,99.4 L926,99.4 M923.6,97.3 L926.9,99.4 L923.6,101.5" fill="none" stroke="#111" stroke-width="1.1"/><path d="M898.8,99 L905.8,83.4 L924,83.4" fill="none" stroke="#333" stroke-width="1"/><line x1="899" y1="83.4" x2="905" y2="83.4" stroke="#999" stroke-width="0.7" stroke-dasharray="1 1"/><path d="M948.1,99.4 L948.1,72 M946,74.5 L948.1,71.3 L950.2,74.5" fill="none" stroke="#111" stroke-width="1.1"/><path d="M948.1,99.4 L976.3,99.4 M974,97.3 L977.3,99.4 L974,101.5" fill="none" stroke="#f47a30" stroke-width="1.1"/><path d="M948.4,99 L955.4,83.4 L974,83.4" fill="none" stroke="#333" stroke-width="1"/><line x1="949" y1="83.4" x2="955" y2="83.4" stroke="#999" stroke-width="0.7" stroke-dasharray="1 1"/><rect x="992.2" y="71.2" width="29.8" height="29.4" fill="#2222b8"/><rect x="993.5" y="83" width="27.3" height="8.5" fill="#b4b8d0"/><ellipse cx="1007" cy="76.5" rx="13.8" ry="5.3" fill="#00c8c8"/><ellipse cx="1007" cy="76.5" rx="12.6" ry="4.6" fill="#30d830"/><ellipse cx="1007" cy="76.5" rx="11.4" ry="3.9" fill="#e8e800"/><ellipse cx="1007" cy="76.5" rx="10.2" ry="3.2" fill="#ff9000"/><ellipse cx="1007" cy="76.5" rx="8.8" ry="2.4" fill="#ee2010"/><ellipse cx="1007" cy="95.5" rx="13.8" ry="5.3" fill="#00c8c8"/><ellipse cx="1007" cy="95.5" rx="12.6" ry="4.6" fill="#30d830"/><ellipse cx="1007" cy="95.5" rx="11.4" ry="3.9" fill="#e8e800"/><ellipse cx="1007" cy="95.5" rx="10.2" ry="3.2" fill="#ff9000"/><ellipse cx="1007" cy="95.5" rx="8.8" ry="2.4" fill="#ee2010"/><rect x="1004.6" y="79.5" width="4.8" height="13" fill="#30d830"/><rect x="1005.6" y="79" width="2.8" height="14" fill="#e8e800"/><path d="M1042,93.5 L1051.2,88 L1061,93.2 L1051.9,100.5 Z" fill="#f47a20" stroke="#c8581a" stroke-width="0.6"/><path d="M1044,93.8 L1051.3,89.6 L1058.8,93.4 L1051.8,98.8 Z" fill="none" stroke="#d86010" stroke-width="0.6" stroke-dasharray="0.8 0.8"/><path d="M1046,73.5 L1051.9,70.2 L1051.9,90.3 L1046,93.2 Z" fill="#8c8cb4" stroke="#55557a" stroke-width="0.5"/><path d="M1049.7,73.5 L1054.1,76 L1054.1,93.2 L1049.7,91.7 Z" fill="#c8c8de" stroke="#8080a8" stroke-width="0.4"/><path d="M1051.2,77.5 L1057,73.8 L1057,93.2 L1051.2,96.5 Z" fill="#8c8cb4" stroke="#55557a" stroke-width="0.5"/><path d="M1053.3,96.5 L1053.3,90.6 M1059.5,92.4 L1059.5,86.6" fill="none" stroke="#111" stroke-width="1.1"/><path d="M1051.7,91.8 L1053.3,89.2 L1054.9,91.8 Z M1057.9,87.8 L1059.5,85.2 L1061.1,87.8 Z" fill="#111"/><g transform="translate(1075,0)"><path d="M0,72.8 L6.2,71.3 L6.2,101.9 L0,101.9 Z" fill="#8484aa"/><path d="M6.2,71.3 L10.6,70.2 L10.6,72.4 L13.5,73.6 L13.5,101.9 L6.2,101.9 Z" fill="#c6c6de"/><path d="M13.5,74 L24,72 L24,77 L14.5,78.5 L14.5,101.9 L13.5,101.9 Z" fill="#8484aa"/><path d="M13.5,78 L20,77 L20,101.9 L13.5,101.9 Z" fill="#8484aa"/><path d="M20,79.7 L31,79.7 L31,92.8 L20,92.8 Z" fill="#c6c6de"/><path d="M14.5,76.8 L31,76.2 L31,79.7 L14.5,80.2 Z" fill="#7878a0"/><path d="M14.5,92.6 L31,92.2 L31,97.2 L14.5,97.6 Z" fill="#7878a0"/><path d="M0,75.2 L13.5,74.5M0,77.6 L13.5,76.9M0,80.0 L13.5,79.3M0,82.4 L13.5,81.8M0,84.8 L13.5,84.2M0,87.2 L13.5,86.7M0,89.6 L13.5,89.2M0,92.0 L13.5,91.6M0,94.4 L13.5,94.0M0,96.8 L13.5,96.5M0,99.2 L13.5,99.0M0,101.6 L13.5,101.4M2.2,72.5 L2.2,101.9M4.4,72.5 L4.4,101.9M6.6,72.5 L6.6,101.9M8.8,72.5 L8.8,101.9M11.0,72.5 L11.0,101.9M13.5,80.5 L20,80.0M13.5,83.0 L20,82.5M13.5,85.5 L20,85.0M13.5,88.0 L20,87.5M13.5,90.5 L20,90.0M13.5,93.0 L20,92.5M13.5,95.5 L20,95.0M13.5,98.0 L20,97.5M13.5,100.5 L20,100.0M15.7,78 L15.7,101.9M17.9,78 L17.9,101.9M22.2,79.7 L22.2,92.8M24.4,79.7 L24.4,92.8M26.6,79.7 L26.6,92.8M28.8,79.7 L28.8,92.8M20,82.3 L31,82.3M20,84.9 L31,84.9M20,87.6 L31,87.6M20,90.2 L31,90.2" fill="none" stroke="#5a5a86" stroke-width="0.4"/></g><g transform="translate(1123,0)"><path d="M0,72.8 L6.2,71.3 L6.2,101.9 L0,101.9 Z" fill="#8484aa"/><path d="M6.2,71.3 L10.6,70.2 L10.6,72.4 L13.5,73.6 L13.5,101.9 L6.2,101.9 Z" fill="#c6c6de"/><path d="M13.5,74 L24,72 L24,77 L14.5,78.5 L14.5,101.9 L13.5,101.9 Z" fill="#8484aa"/><path d="M13.5,78 L20,77 L20,101.9 L13.5,101.9 Z" fill="#8484aa"/><path d="M17.5,80.5 L31,82.8 L31,95.5 L17.5,93.5 Z" fill="#c6c6de"/><path d="M13.8,77 L31,79.6 L31,83.2 L13.8,81 Z" fill="#7878a0"/><path d="M13.8,93 L31,95.2 L31,100 L13.8,98 Z" fill="#7878a0"/><path d="M0,75.2 L13.5,74.5M0,77.6 L13.5,76.9M0,80.0 L13.5,79.3M0,82.4 L13.5,81.8M0,84.8 L13.5,84.2M0,87.2 L13.5,86.7M0,89.6 L13.5,89.2M0,92.0 L13.5,91.6M0,94.4 L13.5,94.0M0,96.8 L13.5,96.5M0,99.2 L13.5,99.0M0,101.6 L13.5,101.4M2.2,72.5 L2.2,101.9M4.4,72.5 L4.4,101.9M6.6,72.5 L6.6,101.9M8.8,72.5 L8.8,101.9M11.0,72.5 L11.0,101.9M13.5,80.5 L20,80.0M13.5,83.0 L20,82.5M13.5,85.5 L20,85.0M13.5,88.0 L20,87.5M13.5,90.5 L20,90.0M13.5,93.0 L20,92.5M13.5,95.5 L20,95.0M13.5,98.0 L20,97.5M13.5,100.5 L20,100.0M15.7,78 L15.7,101.9M17.9,78 L17.9,101.9M20.2,81.0 L20.2,94.0M22.9,81.4 L22.9,94.4M25.6,81.9 L25.6,94.9M28.3,82.3 L28.3,95.3M17.5,83.1 L31,85.4M17.5,85.7 L31,88.0M17.5,88.3 L31,90.6M17.5,90.9 L31,93.2" fill="none" stroke="#5a5a86" stroke-width="0.4"/></g><rect x="938.4" y="65.3" width="46.3" height="71.3" fill="none" rx="6.5" stroke="#f00" stroke-width="4.4"/><rect x="1029.4" y="65.3" width="141.6" height="70.8" fill="none" rx="6.5" stroke="#f00" stroke-width="4.4"/><rect x="0" y="156.5" width="1121" height="1" fill="#b4b4b4"/><rect x="0" y="157.3" width="1121" height="25.5" fill="#9b9b9b"/><path d="M19.3,172 L28.2,163.6 L37,172" fill="none" stroke="#fff" stroke-width="1.7"/><path d="M22,170.5 L22,180 L26.3,180 L26.3,174.5 L30.2,174.5 L30.2,180 L34.5,180 L34.5,170.5" fill="none" stroke="#fff" stroke-width="1.7"/><rect x="55.6" y="162.3" width="12.6" height="10.6" fill="none" stroke="#e4e4e4" stroke-width="1.2"/><circle cx="67.3" cy="173.3" r="4.3" fill="#9b9b9b" stroke="#fff" stroke-width="1.4"/><path d="M67.3,171 L67.3,173.5 L65.3,173.5" fill="none" stroke="#fff" stroke-width="0.9"/><line x1="70.5" y1="176.5" x2="74.6" y2="180.3" stroke="#fff" stroke-width="1.5" /><circle cx="99.6" cy="171" r="7.3" fill="none" stroke="#fff" stroke-width="1.9"/><line x1="104.8" y1="176.2" x2="110" y2="181.3" stroke="#fff" stroke-width="2.2" /><path d="M136.8,162.5 L136.8,179.8 M127.8,171.2 L145.8,171.2" fill="none" stroke="#fff" stroke-width="1.5"/><path d="M136.8,161 L140,164.8 L133.6,164.8 Z M136.8,181.4 L140,177.6 L133.6,177.6 Z M126.3,171.2 L130.1,168 L130.1,174.4 Z M147.3,171.2 L143.5,168 L143.5,174.4 Z" fill="#fff"/><path d="M179.3,169.2 A7.2,7.2 0 1 0 180.2,174.8" fill="none" stroke="#fff" stroke-width="1.8"/><path d="M174.8,169.6 L181.2,170 L181,163.8 Z" fill="#fff"/><path d="M203.0,163.7 L198.5,163.7 L198.5,168.2 M198.5,163.7 L203.1,168.29999999999998M211.3,163.7 L215.8,163.7 L215.8,168.2 M215.8,163.7 L211.20000000000002,168.29999999999998M203.0,180.3 L198.5,180.3 L198.5,175.8 M198.5,180.3 L203.1,175.70000000000002M211.3,180.3 L215.8,180.3 L215.8,175.8 M215.8,180.3 L211.20000000000002,175.70000000000002" fill="none" stroke="#fff" stroke-width="1.3"/><path d="M232,169.5 L246.5,166.3 L251.8,168 L251.8,174.3 L237.3,179.3 L232,176.2 Z" fill="#fff"/><path d="M232,169.5 L237.3,171.6 L251.8,168 M237.3,171.6 L237.3,179.3" fill="none" stroke="#9b9b9b" stroke-width="0.8"/><text x="929.5" y="175.2" font-size="12" fill="#fff" textLength="26.5" lengthAdjust="spacingAndGlyphs">Solid</text><text x="970" y="175.2" font-size="12" fill="#fff" textLength="61" lengthAdjust="spacingAndGlyphs">Transparent</text><text x="1049" y="175.2" font-size="12" fill="#fff" textLength="55.5" lengthAdjust="spacingAndGlyphs">Wireframe</text><rect x="1121" y="157" width="6.8" height="962" fill="#c9c9c9"/><rect x="1127" y="183" width="0.9" height="235" fill="#a0a0a0"/><rect x="1127" y="157.3" width="793" height="25.7" fill="#f26f21"/><rect x="1127" y="417.2" width="793" height="5.6" fill="#cbcbcb"/><rect x="1127" y="417.2" width="793" height="1" fill="#a8a8a8"/><text x="1145" y="176.8" font-size="12.3" fill="#fff" textLength="42.5" lengthAdjust="spacingAndGlyphs">Analysis</text><rect x="1201" y="162.2" width="126" height="21" fill="#f0f0f0"/><text x="1214.2" y="176.8" font-size="12.3" fill="#f26f21" textLength="99.5" lengthAdjust="spacingAndGlyphs">Rotational stiffness</text><rect x="1195" y="157.2" width="137.4" height="30.6" fill="none" rx="6" stroke="#f00" stroke-width="4.4"/><text x="1143.5" y="211.3" font-size="13" fill="#f26f21" textLength="243.8" lengthAdjust="spacingAndGlyphs" font-weight="bold">Rotational stiffness of joint component</text><rect x="1138.75" y="218.5" width="770.0" height="34" fill="#f0f0f0"/><rect x="1138.75" y="252.5" width="770.0" height="29.3" fill="#e0e0e0"/><rect x="1166.6" y="218.5" width="1" height="63.3" fill="#b4b4b4"/><rect x="1205.75" y="218.5" width="1" height="63.3" fill="#b4b4b4"/><rect x="1255.75" y="218.5" width="1" height="63.3" fill="#b4b4b4"/><rect x="1298.7" y="218.5" width="1" height="63.3" fill="#b4b4b4"/><rect x="1348.7" y="218.5" width="1" height="63.3" fill="#b4b4b4"/><rect x="1397.8" y="218.5" width="1" height="63.3" fill="#b4b4b4"/><rect x="1473.7" y="218.5" width="1" height="63.3" fill="#b4b4b4"/><rect x="1546.6" y="218.5" width="1" height="63.3" fill="#b4b4b4"/><rect x="1596.6" y="218.5" width="1" height="63.3" fill="#b4b4b4"/><rect x="1646.6" y="218.5" width="1" height="63.3" fill="#b4b4b4"/><rect x="1696.6" y="218.5" width="1" height="63.3" fill="#b4b4b4"/><rect x="1770.75" y="218.5" width="1" height="63.3" fill="#b4b4b4"/><rect x="1844.5" y="218.5" width="1" height="63.3" fill="#b4b4b4"/><rect x="1138.75" y="252" width="770.0" height="1" fill="#b4b4b4"/><rect x="1138.75" y="218.5" width="770.0" height="63.3" fill="none" stroke="#a6a6a6" stroke-width="1.2"/><rect x="1138.75" y="281.2" width="770.0" height="1.6" fill="#a0a0a0"/><text x="1172.3" y="240.8" font-size="11.6" fill="#3a3a3a" textLength="26.0" lengthAdjust="spacingAndGlyphs" font-weight="bold">Item</text><text x="1211.25" y="240.8" font-size="11.6" fill="#3a3a3a" textLength="34.3" lengthAdjust="spacingAndGlyphs" font-weight="bold">Comp.</text><text x="1261.7" y="240.8" font-size="11.6" fill="#3a3a3a" textLength="30.4" lengthAdjust="spacingAndGlyphs" font-weight="bold">Loads</text><text x="1304.6" y="233.2" font-size="11.6" fill="#3a3a3a" textLength="22.9" lengthAdjust="spacingAndGlyphs" font-weight="bold">MEd</text><text x="1304.6" y="247.8" font-size="11.6" fill="#3a3a3a" textLength="33.7" lengthAdjust="spacingAndGlyphs" font-weight="bold">[kNm]</text><text x="1354.6" y="233.2" font-size="11.6" fill="#3a3a3a" textLength="30.6" lengthAdjust="spacingAndGlyphs" font-weight="bold">Mj,Rd</text><text x="1354.6" y="247.8" font-size="11.6" fill="#3a3a3a" textLength="33.7" lengthAdjust="spacingAndGlyphs" font-weight="bold">[kNm]</text><text x="1404.6" y="233.2" font-size="11.6" fill="#3a3a3a" textLength="25.4" lengthAdjust="spacingAndGlyphs" font-weight="bold">Sj,ini</text><text x="1404.6" y="247.8" font-size="11.6" fill="#3a3a3a" textLength="60.8" lengthAdjust="spacingAndGlyphs" font-weight="bold">[MNm/rad]</text><text x="1478.5" y="233.2" font-size="11.6" fill="#3a3a3a" textLength="16.0" lengthAdjust="spacingAndGlyphs" font-weight="bold">Sjs</text><text x="1478.5" y="247.8" font-size="11.6" fill="#3a3a3a" textLength="61.1" lengthAdjust="spacingAndGlyphs" font-weight="bold">[MNm/rad]</text><text x="1552.5" y="233.2" font-size="11.6" fill="#3a3a3a" textLength="7.0" lengthAdjust="spacingAndGlyphs" font-weight="bold">ϕ</text><text x="1552.5" y="247.8" font-size="11.6" fill="#3a3a3a" textLength="36.2" lengthAdjust="spacingAndGlyphs" font-weight="bold">[mrad]</text><text x="1602.5" y="233.2" font-size="11.6" fill="#3a3a3a" textLength="12.5" lengthAdjust="spacingAndGlyphs" font-weight="bold">ϕc</text><text x="1602.5" y="247.8" font-size="11.6" fill="#3a3a3a" textLength="36.2" lengthAdjust="spacingAndGlyphs" font-weight="bold">[mrad]</text><text x="1652.5" y="233.2" font-size="11.6" fill="#3a3a3a" textLength="5.5" lengthAdjust="spacingAndGlyphs" font-weight="bold">L</text><text x="1652.5" y="247.8" font-size="11.6" fill="#3a3a3a" textLength="17.5" lengthAdjust="spacingAndGlyphs" font-weight="bold">[m]</text><text x="1702" y="233.2" font-size="11.6" fill="#3a3a3a" textLength="20" lengthAdjust="spacingAndGlyphs" font-weight="bold">Sj,R</text><text x="1702" y="247.8" font-size="11.6" fill="#3a3a3a" textLength="61.8" lengthAdjust="spacingAndGlyphs" font-weight="bold">[MNm/rad]</text><text x="1776.25" y="233.2" font-size="11.6" fill="#3a3a3a" textLength="20.2" lengthAdjust="spacingAndGlyphs" font-weight="bold">Sj,P</text><text x="1776.25" y="247.8" font-size="11.6" fill="#3a3a3a" textLength="61.2" lengthAdjust="spacingAndGlyphs" font-weight="bold">[MNm/rad]</text><text x="1850" y="240.8" font-size="11.6" fill="#3a3a3a" textLength="26.2" lengthAdjust="spacingAndGlyphs" font-weight="bold">Class</text><text x="1172.3" y="271.7" font-size="11.8" fill="#444" textLength="11.9" lengthAdjust="spacingAndGlyphs">B1</text><text x="1211.25" y="271.7" font-size="11.8" fill="#444" textLength="16.2" lengthAdjust="spacingAndGlyphs">My</text><text x="1261.7" y="271.7" font-size="11.8" fill="#444" textLength="16.6" lengthAdjust="spacingAndGlyphs">LE1</text><text x="1304.6" y="271.7" font-size="11.8" fill="#444" textLength="20.2" lengthAdjust="spacingAndGlyphs">30.0</text><text x="1354.6" y="271.7" font-size="11.8" fill="#444" textLength="20.2" lengthAdjust="spacingAndGlyphs">34.7</text><text x="1404.6" y="271.7" font-size="11.8" fill="#444" textLength="13.9" lengthAdjust="spacingAndGlyphs">5.1</text><text x="1479" y="271.7" font-size="11.8" fill="#444" textLength="13.5" lengthAdjust="spacingAndGlyphs">3.3</text><text x="1552.5" y="271.7" font-size="11.8" fill="#444" textLength="14.2" lengthAdjust="spacingAndGlyphs">9.0</text><text x="1602.5" y="271.7" font-size="11.8" fill="#444" textLength="20.8" lengthAdjust="spacingAndGlyphs">15.0</text><text x="1652.5" y="271.7" font-size="11.8" fill="#444" textLength="19.5" lengthAdjust="spacingAndGlyphs">6.00</text><text x="1702" y="271.7" font-size="11.8" fill="#444" textLength="20" lengthAdjust="spacingAndGlyphs">24.3</text><text x="1776.25" y="271.7" font-size="11.8" fill="#444" textLength="14.5" lengthAdjust="spacingAndGlyphs">0.5</text><text x="1850" y="271.7" font-size="11.8" fill="#444" textLength="54.6" lengthAdjust="spacingAndGlyphs">Semi-rigid</text><path d="M1150.3,262.5 L1155.3,267 L1150.3,271.5" fill="none" stroke="#444" stroke-width="1.4"/><rect x="1394.2" y="213.4" width="82.6" height="72.7" fill="none" rx="6.5" stroke="#f00" stroke-width="4.4"/><rect x="1841" y="213.4" width="72.6" height="72.7" fill="none" rx="6.5" stroke="#f00" stroke-width="4.4"/><text x="1279" y="446.5" font-size="14.2" fill="#3c3c3c" textLength="196.5" lengthAdjust="spacingAndGlyphs">Stiffness diagram My - ϕy, LE1</text><rect x="1288.6000000000001" y="474.2" width="1.6" height="602.5" fill="#e9e9e9"/><rect x="1396.0" y="474.2" width="1.6" height="602.5" fill="#e9e9e9"/><rect x="1503.4" y="474.2" width="1.6" height="602.5" fill="#e9e9e9"/><rect x="1610.9" y="474.2" width="1.6" height="602.5" fill="#e9e9e9"/><rect x="1181.9" y="927.6" width="430.59999999999997" height="1.6" fill="#ebebeb"/><rect x="1181.9" y="779.2" width="430.59999999999997" height="1.6" fill="#ebebeb"/><rect x="1181.9" y="630.9000000000001" width="430.59999999999997" height="1.6" fill="#ebebeb"/><rect x="1181.9" y="482.5" width="430.59999999999997" height="1.6" fill="#ebebeb"/><rect x="1181.1000000000001" y="474.2" width="1.6" height="603.3" fill="#c4c4c4"/><rect x="1181.1000000000001" y="1075.9" width="431.4" height="1.6" fill="#c4c4c4"/><rect x="1174.9" y="1076.2" width="7" height="1" fill="#b4b4b4"/><text x="1161.3" y="1081.3" font-size="12" fill="#444" textLength="14.3" lengthAdjust="spacingAndGlyphs">0.0</text><rect x="1174.9" y="927.9" width="7" height="1" fill="#b4b4b4"/><text x="1155.9" y="933.0" font-size="12" fill="#444" textLength="19.7" lengthAdjust="spacingAndGlyphs">50.0</text><rect x="1174.9" y="779.5" width="7" height="1" fill="#b4b4b4"/><text x="1149.0" y="784.6" font-size="12" fill="#444" textLength="26.6" lengthAdjust="spacingAndGlyphs">100.0</text><rect x="1174.9" y="631.2" width="7" height="1" fill="#b4b4b4"/><text x="1149.0" y="636.3" font-size="12" fill="#444" textLength="26.6" lengthAdjust="spacingAndGlyphs">150.0</text><rect x="1174.9" y="482.8" width="7" height="1" fill="#b4b4b4"/><text x="1149.0" y="487.9" font-size="12" fill="#444" textLength="26.6" lengthAdjust="spacingAndGlyphs">200.0</text><rect x="1181.4" y="1076.7" width="1" height="6" fill="#b4b4b4"/><text x="1174.3" y="1094" font-size="12" fill="#444" textLength="15.2" lengthAdjust="spacingAndGlyphs">0.0</text><rect x="1288.9" y="1076.7" width="1" height="6" fill="#b4b4b4"/><text x="1279.2" y="1094" font-size="12" fill="#444" textLength="20.4" lengthAdjust="spacingAndGlyphs">10.0</text><rect x="1396.3" y="1076.7" width="1" height="6" fill="#b4b4b4"/><text x="1386.6" y="1094" font-size="12" fill="#444" textLength="20.4" lengthAdjust="spacingAndGlyphs">20.0</text><rect x="1503.7" y="1076.7" width="1" height="6" fill="#b4b4b4"/><text x="1494.0" y="1094" font-size="12" fill="#444" textLength="20.4" lengthAdjust="spacingAndGlyphs">30.0</text><rect x="1611.2" y="1076.7" width="1" height="6" fill="#b4b4b4"/><text x="1601.5" y="1094" font-size="12" fill="#444" textLength="20.4" lengthAdjust="spacingAndGlyphs">40.0</text><text x="1375" y="1110" font-size="12" fill="#444" textLength="44" lengthAdjust="spacingAndGlyphs">ϕ[mrad]</text><text x="0" y="0" font-size="12" fill="#444" textLength="44.5" lengthAdjust="spacingAndGlyphs" transform="translate(1146,797.5) rotate(-90)">M[kNm]</text><rect x="1641.4" y="470.8" width="9" height="9" fill="#006400"/><text x="1655.8" y="479.4" font-size="11.6" fill="#444" textLength="8" lengthAdjust="spacingAndGlyphs">Sj</text><rect x="1641.4" y="485.75" width="9" height="9" fill="#ffa500"/><text x="1655.8" y="494.4" font-size="11.6" fill="#444" textLength="20" lengthAdjust="spacingAndGlyphs">Sj,R</text><rect x="1641.4" y="500.7" width="9" height="9" fill="#0000ff"/><text x="1655.8" y="509.3" font-size="11.6" fill="#444" textLength="19.5" lengthAdjust="spacingAndGlyphs">Sj,P</text><rect x="1641.4" y="515.65" width="9" height="9" fill="#006400"/><text x="1655.8" y="524.2" font-size="11.6" fill="#444" textLength="26" lengthAdjust="spacingAndGlyphs">Sj,ini</text><rect x="1182.7" y="774.7" width="429.79999999999995" height="1.6" fill="#b5cde8"/><rect x="1182.7" y="972.9000000000001" width="429.79999999999995" height="1.6" fill="#b5cde8"/><rect x="1182.7" y="986.9000000000001" width="429.79999999999995" height="1.6" fill="#b5cde8"/><rect x="1182.7" y="1007.1" width="429.79999999999995" height="1.6" fill="#b5cde8"/><text x="1181.6" y="772" font-size="12" fill="#444" textLength="103.5" lengthAdjust="spacingAndGlyphs">Mc,Rd = 101.5 kNm</text><text x="1611.5" y="970.3" font-size="12" fill="#444" textLength="95" lengthAdjust="spacingAndGlyphs" text-anchor="end">Mj,Rd = 34.7 kNm</text><text x="1181.6" y="999.8" font-size="12" fill="#444" textLength="86.7" lengthAdjust="spacingAndGlyphs">MEd = 30.0 kNm</text><text x="1611.5" y="1020.2" font-size="12" fill="#444" textLength="115" lengthAdjust="spacingAndGlyphs" text-anchor="end">2/3 Mj,Rd = 23.2 kNm</text><line x1="1181.9" y1="1076.7" x2="1194.5" y2="988" stroke="#ffa500" stroke-width="1.1" /><line x1="1181.9" y1="1076.7" x2="1590.2" y2="1022.4" stroke="#2a2aff" stroke-width="1.1" /><line x1="1181.9" y1="1076.7" x2="1230" y2="1008" stroke="#0a6a0a" stroke-width="1.3" /><path d="M1181.9,1076.7 1192.6,1057.1 1203.4,1038.7 1212.0,1025.7 1216.3,1020.3 1222.7,1013.8 1230.3,1007.9 1241.0,1001.3 1255.0,995.7 1271.1,990.7 1289.4,985.6 1310.8,980.6 1332.3,976.1 1353.8,972.6 1377.5,969.3 1418.3,965.4 1463.4,962.2 1504.2,959.8 1547.2,957.7 1589.1,955.9" fill="none" stroke="#006400" stroke-width="2.3" stroke-linejoin="round" stroke-linecap="round"/><path d="M1229.5,1009.5 L1235.5,1023.5 L1227.2,1023.5 Z" fill="#c3e186"/><rect x="1227.2" y="1023.3" width="106.8" height="20.4" fill="#c3e186"/><text x="1230.3" y="1037.7" font-size="11.8" fill="#3c3c3c" textLength="100" lengthAdjust="spacingAndGlyphs">Sj,ini = 5.1 MNm/rad</text><circle cx="1230" cy="1008" r="2.3" fill="#fff" stroke="#9acd32" stroke-width="1"/><rect x="0" y="0" width="1920" height="57" fill="#222" filter="url(#brush)"/><rect x="0" y="0" width="1920" height="57" fill="url(#tbg)"/><rect x="0" y="0" width="1920" height="57" fill="url(#tbv)"/><g transform="translate(0,0)"><path d="M21.6,7.6 L81.3,7.6 L76.8,24.6 L15.2,24.6 Z" fill="none" stroke="#f26f21" stroke-width="1.5"/><text x="19.3" y="23.6" font-size="19.5" fill="#f26f21" textLength="57" lengthAdjust="spacingAndGlyphs" font-weight="bold" font-style="italic" stroke="#f26f21" stroke-width="1.2">IDEA</text><text x="85.2" y="22.7" font-size="18.5" fill="#fff" textLength="69.5" lengthAdjust="spacingAndGlyphs" font-weight="bold" font-style="italic">StatiCa</text><text x="157" y="13.2" font-size="7" fill="#ddd">®</text><text x="182" y="21.2" font-size="14.6" fill="#fff" textLength="105.5" lengthAdjust="spacingAndGlyphs" font-weight="bold" font-style="italic" stroke="#fff" stroke-width="0.3">CONNECTION</text><text x="14" y="41.9" font-size="9.6" fill="#fff" textLength="135.7" lengthAdjust="spacingAndGlyphs" font-weight="bold" font-style="italic">Calculate yesterday's estimates</text></g><text x="980" y="21" font-size="14" fill="#e6e6e6" textLength="47" lengthAdjust="spacingAndGlyphs">untitled</text><rect x="1841" y="8" width="17" height="17" fill="#e6e6e6" rx="2.5"/><rect x="1845" y="19" width="9" height="2.2" fill="#111" rx="1"/><rect x="1868" y="8" width="17" height="17" fill="#e6e6e6" rx="2.5"/><rect x="1872.7" y="12.7" width="8" height="7.6" fill="#e6e6e6" stroke="#111" stroke-width="1.5"/><rect x="1895" y="8" width="17" height="17" fill="#e86b1f" rx="2.5"/><path d="M1899.5,12.5 L1907.5,20.5 M1907.5,12.5 L1899.5,20.5" fill="none" stroke="#111" stroke-width="1.8"/><rect x="1630" y="33" width="200" height="17.5" fill="#fff"/><circle cx="1817.5" cy="40" r="4.6" fill="none" stroke="#bdbdbd" stroke-width="1.5"/><line x1="1821" y1="43.5" x2="1827.5" y2="49.5" stroke="#bdbdbd" stroke-width="1.8" /><rect x="1895" y="33" width="17" height="17.5" fill="#e6e6e6" rx="2.5"/><rect x="1902.6" y="37.3" width="2.2" height="2.2" fill="#111"/><rect x="1902.6" y="41.2" width="2.2" height="5.2" fill="#111"/><path d="M215,57 L215,39 Q215,33 221,33 L309,33 Q315,33 315,39 L315,57 Z" fill="#9b9b9b"/><text x="245" y="49" font-size="13" fill="#fff" textLength="40" lengthAdjust="spacingAndGlyphs" font-weight="bold">Project</text><path d="M319,57 L319,39 Q319,33 325,33 L412,33 Q418,33 418,39 L418,57 Z" fill="#9b9b9b"/><text x="349" y="49" font-size="13" fill="#fff" textLength="39" lengthAdjust="spacingAndGlyphs" font-weight="bold">Design</text><path d="M423,57 L423,39 Q423,33 429,33 L516,33 Q522,33 522,39 L522,57 Z" fill="#f26f21"/><text x="454" y="49" font-size="13" fill="#fff" textLength="35" lengthAdjust="spacingAndGlyphs" font-weight="bold">Check</text><path d="M527,57 L527,39 Q527,33 533,33 L620,33 Q626,33 626,39 L626,57 Z" fill="#9b9b9b"/><text x="555" y="49" font-size="13" fill="#fff" textLength="39" lengthAdjust="spacingAndGlyphs" font-weight="bold">Report</text><path d="M631,57 L631,39 Q631,33 637,33 L722,33 Q728,33 728,39 L728,57 Z" fill="#9b9b9b"/><text x="652" y="49" font-size="13" fill="#fff" textLength="51" lengthAdjust="spacingAndGlyphs" font-weight="bold">Materials</text><rect x="0" y="56" width="1920" height="5" fill="#f26f21"/><rect x="419" y="31" width="106" height="33" fill="none" rx="7" stroke="#f00" stroke-width="4"/><rect x="0" y="1120" width="1920" height="32" fill="#222" filter="url(#brush2)"/><rect x="0" y="1120" width="1920" height="32" fill="url(#sbg)"/><rect x="0" y="1119" width="1920" height="1" fill="#c4c4c4"/><rect x="0" y="1120" width="1920" height="1" fill="#0c0c0c"/><text x="23" y="1142" font-size="11.5" fill="#9a9a9a" textLength="71" lengthAdjust="spacingAndGlyphs" font-weight="bold">Design code:</text><text x="99" y="1142" font-size="11.5" fill="#fff" textLength="15" lengthAdjust="spacingAndGlyphs" font-weight="bold">EN</text><text x="134" y="1142" font-size="11.5" fill="#9a9a9a" textLength="46" lengthAdjust="spacingAndGlyphs" font-weight="bold">Analysis:</text><text x="185" y="1142" font-size="11.5" fill="#fff" textLength="49" lengthAdjust="spacingAndGlyphs" font-weight="bold">Stiffness</text><text x="254" y="1142" font-size="11.5" fill="#9a9a9a" textLength="32" lengthAdjust="spacingAndGlyphs" font-weight="bold">Units:</text><text x="294" y="1142" font-size="11.5" fill="#fff" textLength="21" lengthAdjust="spacingAndGlyphs" font-weight="bold">mm</text><text x="1797" y="1142" font-size="12" fill="#f26f21" textLength="29" lengthAdjust="spacingAndGlyphs">www.</text><text x="1827" y="1142" font-size="12" fill="#fff" textLength="56" lengthAdjust="spacingAndGlyphs">ideastatica</text><text x="1883" y="1142" font-size="12" fill="#f26f21" textLength="26" lengthAdjust="spacingAndGlyphs">.com</text>
</svg>
</body></html>
